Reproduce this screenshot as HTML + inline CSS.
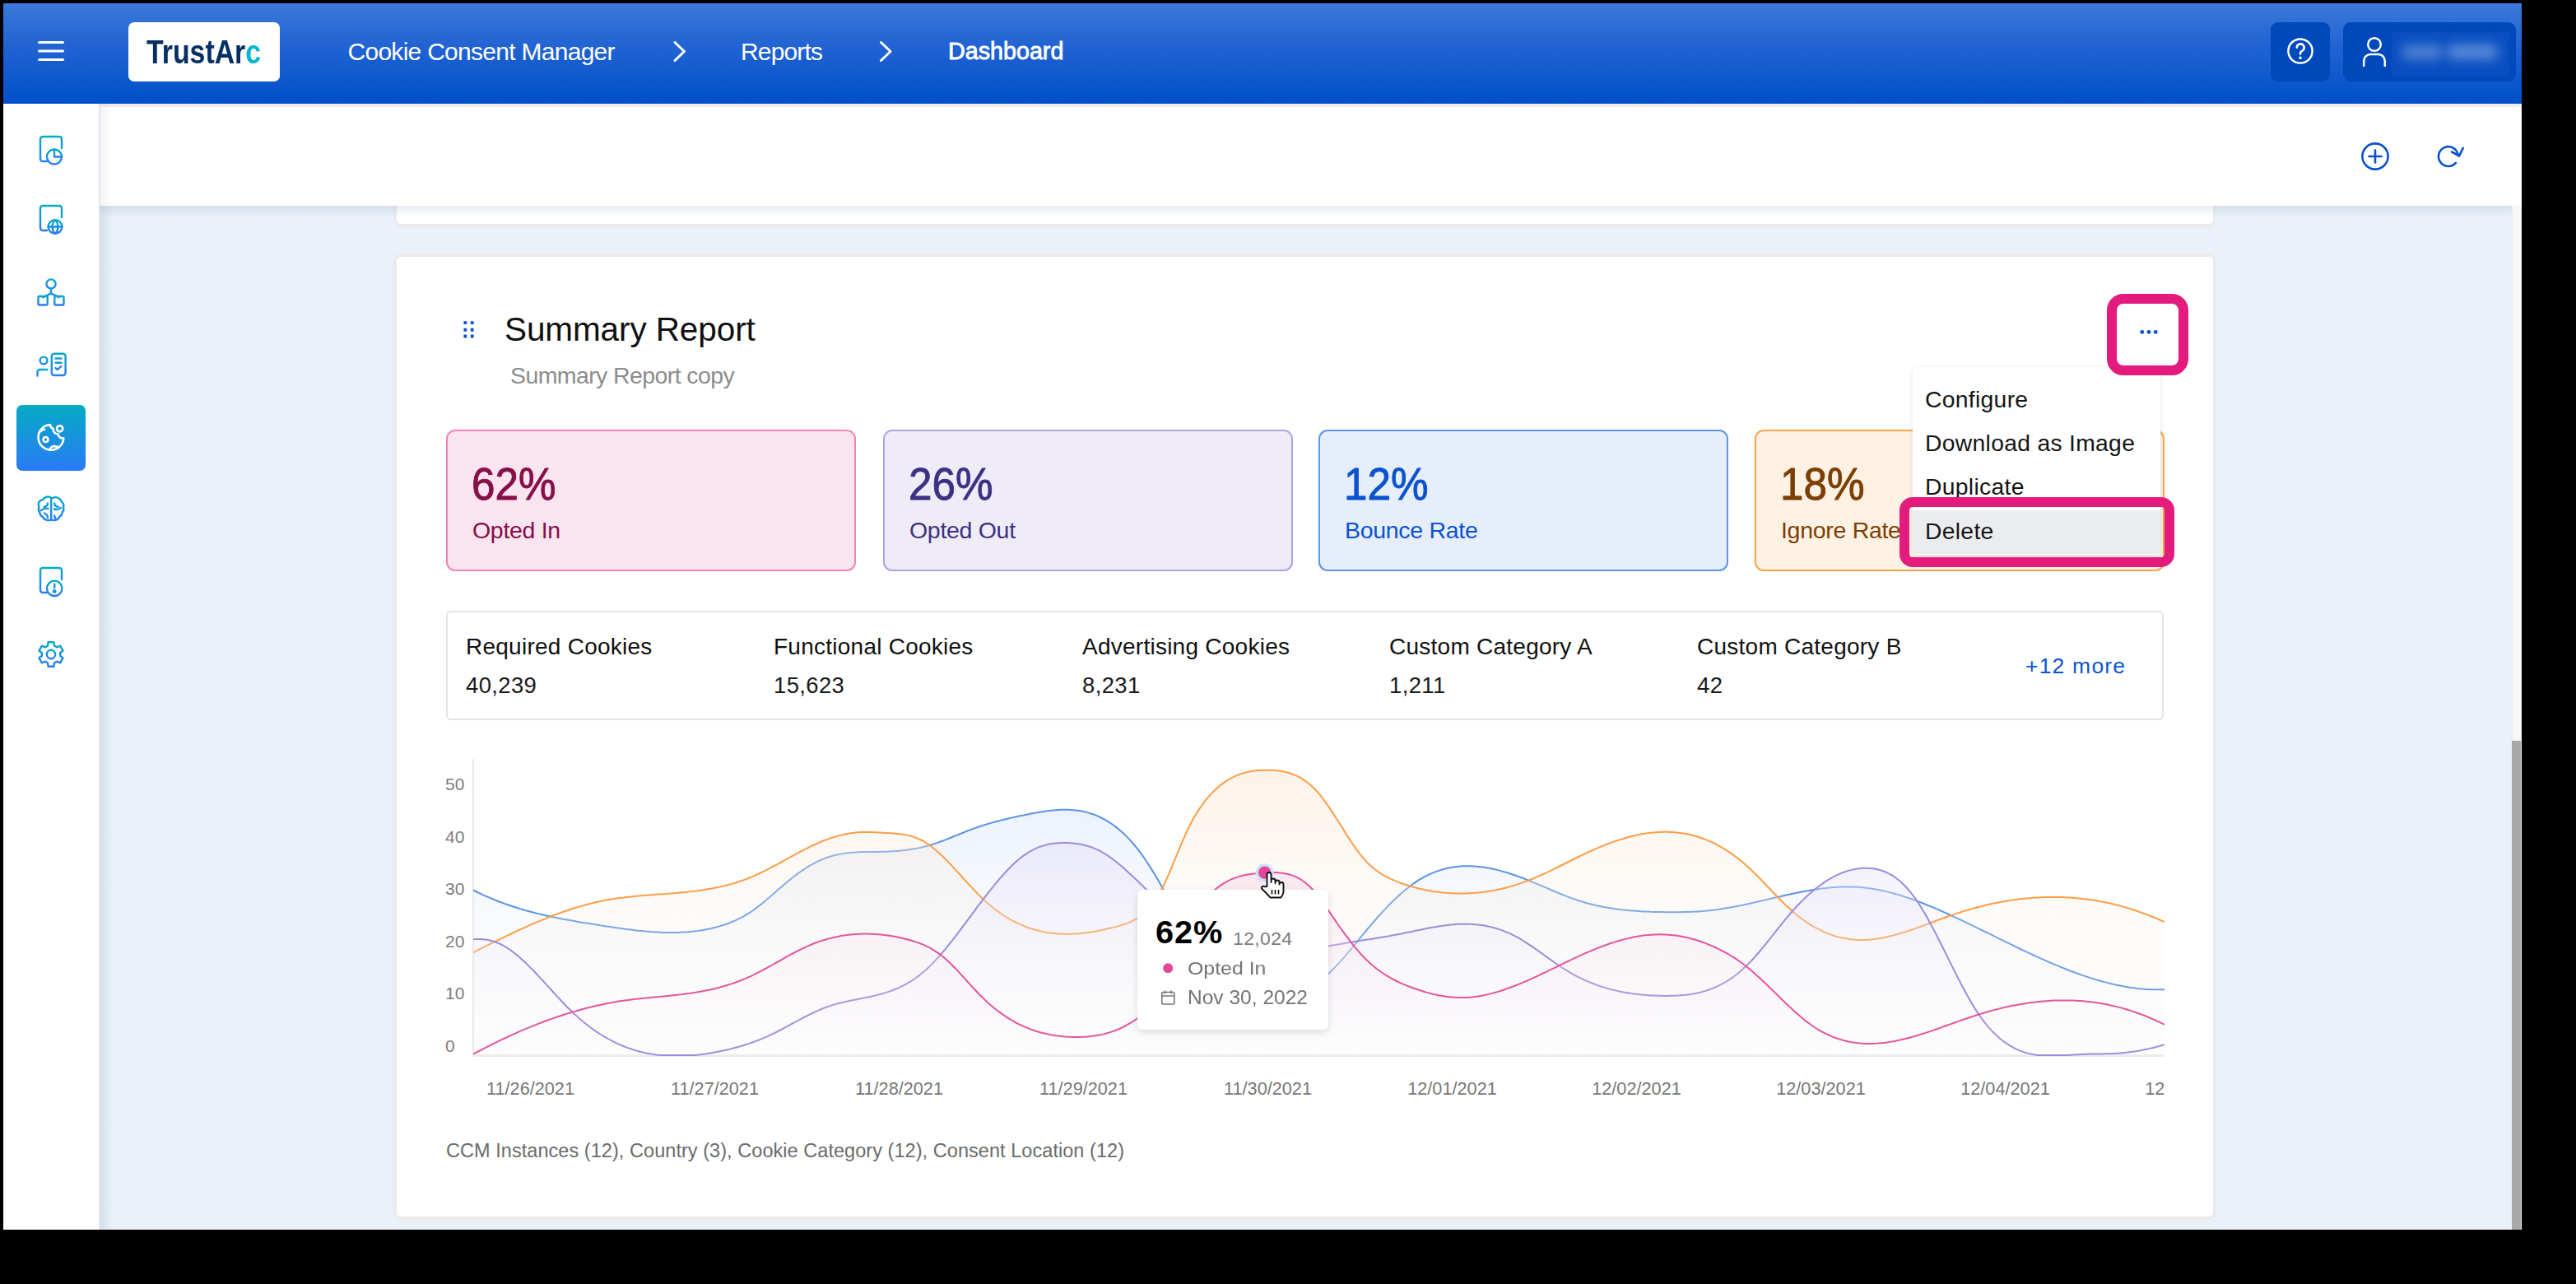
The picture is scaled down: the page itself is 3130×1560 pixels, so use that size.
<!DOCTYPE html>
<html><head><meta charset="utf-8">
<style>
*{margin:0;padding:0;box-sizing:border-box}
html,body{width:3130px;height:1560px;overflow:hidden;background:#000;font-family:"Liberation Sans",sans-serif}
.a{position:absolute}
.t{position:absolute;white-space:nowrap;line-height:1}
#header{left:4px;top:4px;width:3060px;height:122px;background:linear-gradient(#3a79d9,#2062d2 45%,#0050c9)}
#side{left:4px;top:126px;width:118px;height:1368px;background:#fff;border-right:2px solid #dfe6ee}
#topbar{left:122px;top:126px;width:2942px;height:124px;background:#fff;border-top:4px solid #efefef}
#main{left:122px;top:250px;width:2930px;height:1244px;background:#eaf1f9;overflow:hidden}
#track{left:3052px;top:250px;width:12px;height:1244px;background:#f7f7f7;border-left:1px solid #ececec}
#thumb{left:3052px;top:900px;width:11px;height:594px;background:#a9a9a9}
.card{position:absolute;background:#fff;border:4px solid #ebebeb;border-radius:9px}
.stat{position:absolute;top:522px;width:498px;height:172px;border:2px solid;border-radius:11px}
.stat .v{position:absolute;left:29px;top:36px;font-size:56px;line-height:1;letter-spacing:0;transform:scaleX(0.915);transform-origin:0 0;-webkit-text-stroke:0.9px currentColor}
.stat .l{position:absolute;left:30px;top:106px;font-size:28.5px;line-height:1;letter-spacing:-0.3px}
.cat{position:absolute;font-size:28px;line-height:1;color:#111;letter-spacing:0.25px}
.catv{position:absolute;font-size:27.5px;line-height:1;color:#1a1a1a;letter-spacing:0.35px}
.yl{position:absolute;font-size:21px;line-height:1;color:#7d7d7d}
.xl{position:absolute;font-size:21.7px;line-height:1;color:#777;width:160px;text-align:center}
.mi{position:absolute;left:2339px;font-size:28.3px;line-height:1;color:#151515;letter-spacing:0.3px}
</style></head><body>

<!-- HEADER -->
<div id="header" class="a"></div>
<svg class="a" style="left:0;top:0" width="400" height="130">
  <rect x="46" y="50" width="32" height="3" rx="1.5" fill="#fff"/>
  <rect x="46" y="60.5" width="32" height="3" rx="1.5" fill="#fff"/>
  <rect x="46" y="71" width="32" height="3" rx="1.5" fill="#fff"/>
</svg>
<div class="a" style="left:156px;top:27px;width:184px;height:72px;background:#fff;border-radius:7px"></div>
<div class="t" style="left:178px;top:42.5px;font-size:40px;font-weight:700;letter-spacing:0;color:#062f63;transform:scaleX(0.845);transform-origin:0 0">TrustAr<span style="color:#00b6d2">c</span></div>
<div class="t" style="left:422.5px;top:47.5px;font-size:30px;color:#fff;letter-spacing:-0.72px">Cookie Consent Manager</div>
<svg class="a" style="left:810px;top:40px" width="300" height="45">
  <path d="M10 11.5 L21.5 22.5 L10 33.5" fill="none" stroke="#fff" stroke-width="3" stroke-linecap="round" stroke-linejoin="round"/>
  <path d="M260.5 11.5 L272 22.5 L260.5 33.5" fill="none" stroke="#fff" stroke-width="3" stroke-linecap="round" stroke-linejoin="round"/>
</svg>
<div class="t" style="left:900px;top:47.5px;font-size:30px;color:#fff;letter-spacing:-0.85px">Reports</div>
<div class="t" style="left:1152px;top:48px;font-size:28.7px;color:#fff;letter-spacing:0;transform:scaleX(1.0);transform-origin:0 0;-webkit-text-stroke:0.8px #fff">Dashboard</div>
<div class="a" style="left:2759px;top:27px;width:72px;height:72px;background:#0049bc;border-radius:9px"></div>
<svg class="a" style="left:2759px;top:27px" width="72" height="72">
  <circle cx="36" cy="35" r="14.6" fill="none" stroke="#fff" stroke-width="2.5"/>
  <path d="M31.8 30.8 a4.4 4.4 0 1 1 6.6 3.8 c-1.6 0.9 -2.4 1.6 -2.4 3.4 v0.6" fill="none" stroke="#fff" stroke-width="2.6" stroke-linecap="round"/>
  <circle cx="36" cy="43.2" r="1.8" fill="#fff"/>
</svg>
<div class="a" style="left:2847px;top:27px;width:210px;height:72px;background:#0049bc;border-radius:9px"></div>
<div class="a" style="left:2906px;top:39px;width:142px;height:54px;background:#0a4fc2"></div>
<div class="a" style="left:2918px;top:55px;width:50px;height:17px;background:#5283d4;border-radius:9px;filter:blur(7px)"></div>
<div class="a" style="left:2972px;top:54px;width:64px;height:18px;background:#5a8ad8;border-radius:9px;filter:blur(7px)"></div>
<svg class="a" style="left:2847px;top:27px" width="60" height="72">
  <circle cx="38" cy="27" r="7.8" fill="none" stroke="#fff" stroke-width="2.5"/>
  <path d="M25.2 54 v-7 a8 8 0 0 1 8 -8 h9.6 a8 8 0 0 1 8 8 v7" fill="none" stroke="#fff" stroke-width="2.5"/>
</svg>

<!-- SIDEBAR -->
<div id="side" class="a"></div>
<div class="a" style="left:20px;top:492px;width:84px;height:80px;border-radius:7px;background:linear-gradient(#05abc3,#2a7bf7)"></div>
<svg class="a" style="left:0;top:126px" width="120" height="720">
  <defs>
    <linearGradient id="ig" x1="0" y1="0" x2="0" y2="1"><stop offset="0" stop-color="#06a9c6"/><stop offset="1" stop-color="#2a7ef5"/></linearGradient>
    <linearGradient id="ig2" gradientUnits="userSpaceOnUse" x1="0" y1="477" x2="0" y2="509"><stop offset="0" stop-color="#06a9c6"/><stop offset="1" stop-color="#2a7ef5"/></linearGradient>
    <linearGradient id="ig3" gradientUnits="userSpaceOnUse" x1="0" y1="563" x2="0" y2="598"><stop offset="0" stop-color="#06a9c6"/><stop offset="1" stop-color="#2a7ef5"/></linearGradient>
  </defs>
  <g fill="none" stroke="url(#ig)" stroke-width="2.4" stroke-linecap="round" stroke-linejoin="round">
    <!-- icon1 doc + pie (center y 182 => local 56) -->
    <g transform="translate(0,0)">
      <path d="M57 70 h-5 a3 3 0 0 1 -3 -3 v-24 a3 3 0 0 1 3 -3 h20 a3 3 0 0 1 3 3 v11"/>
      <circle cx="66" cy="64.5" r="9"/>
      <path d="M66 55.5 v9 h9"/>
    </g>
    <!-- icon2 doc + globe (y 266 => local 140) -->
    <g>
      <path d="M57 154 h-5 a3 3 0 0 1 -3 -3 v-24 a3 3 0 0 1 3 -3 h20 a3 3 0 0 1 3 3 v11"/>
      <circle cx="67" cy="149.5" r="8.4"/>
      <path d="M58.6 149.5 h16.8 M67 141.1 c-4.5 4 -4.5 12.8 0 16.8 M67 141.1 c4.5 4 4.5 12.8 0 16.8"/>
    </g>
    <!-- icon3 hierarchy (y 355 => local 229) -->
    <g>
      <circle cx="62" cy="219" r="5.6"/>
      <path d="M62 224.6 v6 M62 230.6 l-10 4.5 M62 230.6 l10 4.5"/>
      <rect x="46.5" y="234" width="11.2" height="10.5" rx="1.5"/>
      <rect x="66.3" y="234" width="11.2" height="10.5" rx="1.5"/>
    </g>
    <!-- icon4 person + clipboard (y 442 => local 316) -->
    <g>
      <circle cx="53" cy="312" r="4.4"/>
      <path d="M45.5 330.5 v-4.5 a3 3 0 0 1 3 -3 h9"/>
      <rect x="62.8" y="303.7" width="16.8" height="26.3" rx="3"/>
      <path d="M67.5 309.5 h7 M67.5 314.8 h7 M67.5 321 l2.3 2.2 l4.5 -4"/>
    </g>
    <!-- icon6 brain (y 619 => local 493) -->
    <g stroke="url(#ig2)">
      <path d="M62.2 478.8 c-2 -1.5 -5 -1.5 -7 -0.5 c-2 0.8 -2.5 2 -3.3 3 c-2.5 0.3 -4.5 2 -5 4.5 c-0.5 2 0 3.5 0.5 4.5 c-0.8 2 -0.5 4.5 0.8 6 c0 2.5 1.5 4.5 3.5 5.5 c0.8 2 2.5 3.5 5 4 c2 0.5 4 0.3 5.5 -0.5 c1.5 0.8 3.5 1 5.5 0.5 c2.5 -0.5 4 -2 4.5 -4 c2 -1 3.5 -3 3.5 -5.5 c1.5 -1.5 2 -4 1.2 -6 c1 -2.5 0 -5 -1.8 -6.5 c-1 -2 -2.5 -4 -4.5 -5 c-2 -0.8 -5 -0.8 -7 0.5 z"/>
      <path d="M62.2 479 v26.5"/>
      <path d="M58 485.5 c0 2.5 -1.5 4 -4.5 4.3 M58.5 492 c-3 -1 -6 0 -8.5 2 M54 497.5 c2 0.8 4 3 4 5.5 M66.2 485.5 c0 2.5 1.5 4 4.5 4.3 M65.8 492.5 c3 1 6 0.5 8 -1.5 M66.2 500.5 c0 2 1 3.5 2.5 4.5"/>
    </g>
    <!-- icon7 doc + alert (y 706 => local 580) -->
    <g>
      <path d="M57 594 h-5 a3 3 0 0 1 -3 -3 v-24 a3 3 0 0 1 3 -3 h20 a3 3 0 0 1 3 3 v11"/>
      <circle cx="66.2" cy="588.8" r="9.2"/>
      <path d="M66.2 583.6 v4.4" stroke="url(#ig3)"/>
    </g>
    <circle cx="66.2" cy="592.4" r="1.25" fill="#2a7ef5"/>
    <!-- icon8 gear (y 795 => local 669) -->
    <g>
      <path d="M66.01 658.54 L65.42 654.19 L58.58 654.19 L57.99 658.54 L54.95 660.30 L50.88 658.63 L47.46 664.56 L50.94 667.25 L50.94 670.75 L47.46 673.44 L50.88 679.37 L54.95 677.70 L57.99 679.46 L58.58 683.81 L65.42 683.81 L66.01 679.46 L69.05 677.70 L73.12 679.37 L76.54 673.44 L73.06 670.75 L73.06 667.25 L76.54 664.56 L73.12 658.63 L69.05 660.30 Z"/>
      <circle cx="62" cy="669" r="5.2"/>
    </g>
  </g>
  <!-- active cookie icon (y 531 => local 405) -->
  <g fill="none" stroke="#fff" stroke-width="2.6" stroke-linecap="round" stroke-linejoin="round">
    <path d="M61 390 a15.4 15.4 0 1 0 16.3 16.5 c-3.5 0.5 -6.5 -2 -6.8 -5.2 c-3.5 0 -6.3 -3 -6 -6.5 c-2.2 -1 -3.7 -2.7 -3.5 -4.8 z"/>
    <circle cx="72.6" cy="394.8" r="3.6"/>
    <circle cx="55.5" cy="408" r="3"/>
    <path d="M60.5 420 a6 6 0 0 1 10 -2"/>
    <path d="M50 398 a3 3 0 0 1 4 -2"/>
  </g>
</svg>

<!-- TOPBAR + MAIN -->
<div id="topbar" class="a"></div>
<div class="a" style="left:122px;top:126px;width:16px;height:124px;background:linear-gradient(90deg,rgba(0,0,0,0.045),rgba(0,0,0,0))"></div>
<svg class="a" style="left:2860px;top:164px" width="140" height="52">
  <g fill="none" stroke="#0a52cc" stroke-width="2.6" stroke-linecap="round">
    <circle cx="26" cy="26" r="15.6"/>
    <path d="M26 18.5 v15 M18.5 26 h15"/>
    <g transform="translate(0,-1.5)"><path d="M123.9 35.3 A11.9 11.9 0 1 1 126.6 25.5"/>
    <path d="M119 22 L128 27 L132.8 17.4"/></g>
  </g>
</svg>
<div id="main" class="a">
  <div class="card" style="left:356px;top:-70px;width:2215px;height:96px"></div>
  <div class="a" style="left:0;top:0;width:2930px;height:14px;background:linear-gradient(rgba(90,120,160,0.14),rgba(90,120,160,0))"></div>
  <div class="a" style="left:0;top:0;width:16px;height:1244px;background:linear-gradient(90deg,rgba(90,120,160,0.14),rgba(90,120,160,0))"></div>
</div>
<div id="track" class="a"></div>
<div id="thumb" class="a"></div>


<!-- MAIN CARD -->
<div class="card" style="left:478px;top:308px;width:2215px;height:1174px"></div>

<!-- drag handle -->
<svg class="a" style="left:560px;top:388px" width="20" height="25">
  <g fill="#0a52cc">
    <rect x="3.4" y="2.2" width="3.8" height="3.9" rx="0.6"/><rect x="11.8" y="2.2" width="3.8" height="3.9" rx="0.6"/>
    <rect x="3.4" y="10.8" width="3.8" height="3.9" rx="0.6"/><rect x="11.8" y="10.8" width="3.8" height="3.9" rx="0.6"/>
    <rect x="3.4" y="18.6" width="3.8" height="3.9" rx="0.6"/><rect x="11.8" y="18.6" width="3.8" height="3.9" rx="0.6"/>
  </g>
</svg>
<div class="t" style="left:613px;top:380px;font-size:40.5px;color:#111;letter-spacing:-0.1px">Summary Report</div>
<div class="t" style="left:620px;top:441.5px;font-size:28.5px;color:#8c8c8c;letter-spacing:-0.6px">Summary Report copy</div>

<!-- stat cards -->
<div class="stat" style="left:542px;background:#fae4ef;border-color:#ee86b4;color:#860f48"><div class="v">62%</div><div class="l">Opted In</div></div>
<div class="stat" style="left:1073px;background:#efecf8;border-color:#ada4e4;color:#3d3183"><div class="v">26%</div><div class="l">Opted Out</div></div>
<div class="stat" style="left:1602px;background:#e6eefb;border-color:#5d95e8;color:#0b52cf"><div class="v">12%</div><div class="l">Bounce Rate</div></div>
<div class="stat" style="left:2132px;background:#fff2e4;border-color:#f7a650;color:#7b3f03"><div class="v">18%</div><div class="l">Ignore Rate</div></div>

<!-- category table -->
<div class="a" style="left:542px;top:742px;width:2087px;height:133px;border:2px solid #e4e4e4;border-radius:6px;background:#fff"></div>
<div class="cat t" style="left:566px;top:772px">Required Cookies</div>
<div class="catv t" style="left:566px;top:818.5px">40,239</div>
<div class="cat t" style="left:940px;top:772px">Functional Cookies</div>
<div class="catv t" style="left:940px;top:818.5px">15,623</div>
<div class="cat t" style="left:1315px;top:772px">Advertising Cookies</div>
<div class="catv t" style="left:1315px;top:818.5px">8,231</div>
<div class="cat t" style="left:1688px;top:772px">Custom Category A</div>
<div class="catv t" style="left:1688px;top:818.5px">1,211</div>
<div class="cat t" style="left:2062px;top:772px">Custom Category B</div>
<div class="catv t" style="left:2062px;top:818.5px">42</div>
<div class="t" style="left:2461px;top:796px;font-size:26.5px;color:#0b55d2;letter-spacing:1.2px">+12 more</div>

<!-- CHART -->
<svg class="a" style="left:0;top:0" width="3130" height="1560">
  <defs>
    <clipPath id="cc"><rect x="575" y="900" width="2055" height="383"/></clipPath>
    <linearGradient id="gp" gradientUnits="userSpaceOnUse" x1="0" y1="1060" x2="0" y2="1282"><stop offset="0" stop-color="#f7d9ea" stop-opacity="0.55"/><stop offset="0.55" stop-color="#f7e6f0" stop-opacity="0.2"/><stop offset="1" stop-color="#f7e6f0" stop-opacity="0.02"/></linearGradient>
    <linearGradient id="gb" gradientUnits="userSpaceOnUse" x1="0" y1="985" x2="0" y2="1282"><stop offset="0" stop-color="#dde8fb" stop-opacity="0.55"/><stop offset="0.55" stop-color="#e8eef8" stop-opacity="0.2"/><stop offset="1" stop-color="#e8eef8" stop-opacity="0.02"/></linearGradient>
    <linearGradient id="go" gradientUnits="userSpaceOnUse" x1="0" y1="934" x2="0" y2="1282"><stop offset="0" stop-color="#fde9d6" stop-opacity="0.55"/><stop offset="0.55" stop-color="#f6eee6" stop-opacity="0.2"/><stop offset="1" stop-color="#f6eee6" stop-opacity="0.02"/></linearGradient>
    <linearGradient id="gu" gradientUnits="userSpaceOnUse" x1="0" y1="1025" x2="0" y2="1282"><stop offset="0" stop-color="#e6e0f8" stop-opacity="0.55"/><stop offset="0.55" stop-color="#eeeaf8" stop-opacity="0.2"/><stop offset="1" stop-color="#eeeaf8" stop-opacity="0.02"/></linearGradient>
  </defs>
  <rect x="574" y="922" width="2" height="360" fill="#e8e8e8"/>
  <rect x="575" y="1281" width="2055" height="3" fill="#ececec"/>
  <g clip-path="url(#cc)">
    <g stroke-width="2" fill-opacity="1">
    <path d="M575.0 1082.7 L578.0 1084.2 L581.0 1085.7 L584.0 1087.1 L587.0 1088.5 L590.0 1089.8 L593.0 1091.1 L596.0 1092.4 L599.0 1093.7 L602.0 1094.9 L605.0 1096.0 L608.0 1097.2 L611.0 1098.3 L614.0 1099.4 L617.0 1100.4 L620.0 1101.5 L623.0 1102.5 L626.0 1103.4 L629.0 1104.4 L632.0 1105.3 L635.0 1106.2 L638.0 1107.1 L641.0 1107.9 L644.0 1108.7 L647.0 1109.5 L650.0 1110.3 L653.0 1111.1 L656.0 1111.8 L659.0 1112.5 L662.0 1113.2 L665.0 1113.9 L668.0 1114.5 L671.0 1115.2 L674.0 1115.8 L677.0 1116.4 L680.0 1117.0 L683.0 1117.6 L686.0 1118.2 L689.0 1118.7 L692.0 1119.3 L695.0 1119.8 L698.0 1120.3 L701.0 1120.9 L704.0 1121.4 L707.0 1121.9 L710.0 1122.4 L713.0 1122.8 L716.0 1123.3 L719.0 1123.8 L722.0 1124.3 L725.0 1124.7 L728.0 1125.2 L731.0 1125.7 L734.0 1126.1 L737.0 1126.6 L740.0 1127.0 L743.0 1127.5 L746.0 1127.9 L749.0 1128.4 L752.0 1128.8 L755.0 1129.2 L758.0 1129.7 L761.0 1130.1 L764.0 1130.5 L767.0 1130.8 L770.0 1131.2 L773.0 1131.6 L776.0 1131.9 L779.0 1132.2 L782.0 1132.5 L785.0 1132.8 L788.0 1133.0 L791.0 1133.3 L794.0 1133.5 L797.0 1133.7 L800.0 1133.8 L803.0 1134.0 L806.0 1134.1 L809.0 1134.2 L812.0 1134.2 L815.0 1134.2 L818.0 1134.2 L821.0 1134.2 L824.0 1134.1 L827.0 1134.0 L830.0 1133.8 L833.0 1133.6 L836.0 1133.4 L839.0 1133.1 L842.0 1132.8 L845.0 1132.5 L848.0 1132.1 L851.0 1131.6 L854.0 1131.1 L857.0 1130.6 L860.0 1130.0 L863.0 1129.4 L866.0 1128.7 L869.0 1128.0 L872.0 1127.2 L875.0 1126.3 L878.0 1125.4 L881.0 1124.4 L884.0 1123.4 L887.0 1122.2 L890.0 1121.0 L893.0 1119.8 L896.0 1118.4 L899.0 1116.9 L902.0 1115.3 L905.0 1113.6 L908.0 1111.9 L911.0 1110.0 L914.0 1108.0 L917.0 1105.8 L920.0 1103.6 L923.0 1101.3 L926.0 1098.9 L929.0 1096.4 L932.0 1093.8 L935.0 1091.3 L938.0 1088.7 L941.0 1086.0 L944.0 1083.4 L947.0 1080.8 L950.0 1078.2 L953.0 1075.6 L956.0 1073.1 L959.0 1070.6 L962.0 1068.2 L965.0 1065.9 L968.0 1063.6 L971.0 1061.4 L974.0 1059.3 L977.0 1057.3 L980.0 1055.4 L983.0 1053.6 L986.0 1051.8 L989.0 1050.2 L992.0 1048.6 L995.0 1047.2 L998.0 1045.8 L1001.0 1044.6 L1004.0 1043.4 L1007.0 1042.4 L1010.0 1041.5 L1013.0 1040.6 L1016.0 1039.9 L1019.0 1039.3 L1022.0 1038.7 L1025.0 1038.2 L1028.0 1037.8 L1031.0 1037.4 L1034.0 1037.1 L1037.0 1036.9 L1040.0 1036.7 L1043.0 1036.5 L1046.0 1036.4 L1049.0 1036.3 L1052.0 1036.3 L1055.0 1036.2 L1058.0 1036.2 L1061.0 1036.1 L1064.0 1036.1 L1067.0 1036.1 L1070.0 1036.0 L1073.0 1036.0 L1076.0 1035.9 L1079.0 1035.8 L1082.0 1035.7 L1085.0 1035.5 L1088.0 1035.3 L1091.0 1035.1 L1094.0 1034.8 L1097.0 1034.5 L1100.0 1034.1 L1103.0 1033.7 L1106.0 1033.3 L1109.0 1032.8 L1112.0 1032.3 L1115.0 1031.7 L1118.0 1031.1 L1121.0 1030.4 L1124.0 1029.7 L1127.0 1028.9 L1130.0 1028.0 L1133.0 1027.1 L1136.0 1026.1 L1139.0 1025.1 L1142.0 1024.0 L1145.0 1022.9 L1148.0 1021.8 L1151.0 1020.6 L1154.0 1019.4 L1157.0 1018.2 L1160.0 1017.0 L1163.0 1015.8 L1166.0 1014.6 L1169.0 1013.4 L1172.0 1012.2 L1175.0 1011.0 L1178.0 1009.8 L1181.0 1008.7 L1184.0 1007.6 L1187.0 1006.5 L1190.0 1005.5 L1193.0 1004.5 L1196.0 1003.5 L1199.0 1002.6 L1202.0 1001.7 L1205.0 1000.8 L1208.0 1000.0 L1211.0 999.2 L1214.0 998.4 L1217.0 997.6 L1220.0 996.9 L1223.0 996.2 L1226.0 995.5 L1229.0 994.8 L1232.0 994.1 L1235.0 993.5 L1238.0 992.8 L1241.0 992.2 L1244.0 991.6 L1247.0 991.0 L1250.0 990.4 L1253.0 989.8 L1256.0 989.2 L1259.0 988.6 L1262.0 988.1 L1265.0 987.6 L1268.0 987.1 L1271.0 986.7 L1274.0 986.3 L1277.0 985.9 L1280.0 985.6 L1283.0 985.4 L1286.0 985.2 L1289.0 985.0 L1292.0 984.9 L1295.0 984.9 L1298.0 985.0 L1301.0 985.1 L1304.0 985.4 L1307.0 985.7 L1310.0 986.0 L1313.0 986.5 L1316.0 987.1 L1319.0 987.8 L1322.0 988.6 L1325.0 989.5 L1328.0 990.5 L1331.0 991.6 L1334.0 992.8 L1337.0 994.2 L1340.0 995.7 L1343.0 997.3 L1346.0 999.1 L1349.0 1001.0 L1352.0 1003.1 L1355.0 1005.3 L1358.0 1007.6 L1361.0 1010.1 L1364.0 1012.8 L1367.0 1015.6 L1370.0 1018.6 L1373.0 1021.8 L1376.0 1025.2 L1379.0 1028.7 L1382.0 1032.4 L1385.0 1036.3 L1388.0 1040.4 L1391.0 1044.7 L1394.0 1049.2 L1397.0 1053.8 L1400.0 1058.6 L1403.0 1063.5 L1406.0 1068.5 L1409.0 1073.7 L1412.0 1078.9 L1415.0 1084.1 L1418.0 1089.5 L1421.0 1094.8 L1424.0 1100.2 L1427.0 1105.6 L1430.0 1111.0 L1433.0 1116.4 L1436.0 1121.7 L1439.0 1127.0 L1442.0 1132.2 L1445.0 1137.3 L1448.0 1142.3 L1451.0 1147.2 L1454.0 1151.9 L1457.0 1156.6 L1460.0 1161.0 L1463.0 1165.3 L1466.0 1169.4 L1469.0 1173.4 L1472.0 1177.1 L1475.0 1180.7 L1478.0 1184.1 L1481.0 1187.4 L1484.0 1190.5 L1487.0 1193.4 L1490.0 1196.1 L1493.0 1198.7 L1496.0 1201.2 L1499.0 1203.4 L1502.0 1205.5 L1505.0 1207.5 L1508.0 1209.3 L1511.0 1210.9 L1514.0 1212.4 L1517.0 1213.8 L1520.0 1215.0 L1523.0 1216.0 L1526.0 1216.9 L1529.0 1217.7 L1532.0 1218.3 L1535.0 1218.7 L1538.0 1219.1 L1541.0 1219.2 L1544.0 1219.3 L1547.0 1219.2 L1550.0 1219.0 L1553.0 1218.6 L1556.0 1218.1 L1559.0 1217.5 L1562.0 1216.7 L1565.0 1215.8 L1568.0 1214.8 L1571.0 1213.7 L1574.0 1212.4 L1577.0 1211.0 L1580.0 1209.5 L1583.0 1207.9 L1586.0 1206.2 L1589.0 1204.3 L1592.0 1202.3 L1595.0 1200.2 L1598.0 1198.0 L1601.0 1195.7 L1604.0 1193.3 L1607.0 1190.7 L1610.0 1188.1 L1613.0 1185.4 L1616.0 1182.5 L1619.0 1179.5 L1622.0 1176.5 L1625.0 1173.3 L1628.0 1170.1 L1631.0 1166.7 L1634.0 1163.3 L1637.0 1159.8 L1640.0 1156.2 L1643.0 1152.6 L1646.0 1148.9 L1649.0 1145.3 L1652.0 1141.6 L1655.0 1137.9 L1658.0 1134.3 L1661.0 1130.7 L1664.0 1127.2 L1667.0 1123.6 L1670.0 1120.2 L1673.0 1116.7 L1676.0 1113.4 L1679.0 1110.1 L1682.0 1106.8 L1685.0 1103.6 L1688.0 1100.5 L1691.0 1097.5 L1694.0 1094.5 L1697.0 1091.6 L1700.0 1088.9 L1703.0 1086.2 L1706.0 1083.6 L1709.0 1081.1 L1712.0 1078.7 L1715.0 1076.5 L1718.0 1074.3 L1721.0 1072.3 L1724.0 1070.4 L1727.0 1068.6 L1730.0 1066.9 L1733.0 1065.4 L1736.0 1063.9 L1739.0 1062.5 L1742.0 1061.3 L1745.0 1060.1 L1748.0 1059.1 L1751.0 1058.1 L1754.0 1057.2 L1757.0 1056.5 L1760.0 1055.8 L1763.0 1055.2 L1766.0 1054.7 L1769.0 1054.3 L1772.0 1054.0 L1775.0 1053.7 L1778.0 1053.5 L1781.0 1053.5 L1784.0 1053.4 L1787.0 1053.5 L1790.0 1053.6 L1793.0 1053.8 L1796.0 1054.1 L1799.0 1054.4 L1802.0 1054.8 L1805.0 1055.2 L1808.0 1055.8 L1811.0 1056.3 L1814.0 1056.9 L1817.0 1057.6 L1820.0 1058.3 L1823.0 1059.1 L1826.0 1060.0 L1829.0 1060.8 L1832.0 1061.7 L1835.0 1062.7 L1838.0 1063.7 L1841.0 1064.7 L1844.0 1065.8 L1847.0 1066.9 L1850.0 1068.0 L1853.0 1069.1 L1856.0 1070.3 L1859.0 1071.5 L1862.0 1072.8 L1865.0 1074.0 L1868.0 1075.3 L1871.0 1076.5 L1874.0 1077.8 L1877.0 1079.1 L1880.0 1080.4 L1883.0 1081.7 L1886.0 1083.0 L1889.0 1084.2 L1892.0 1085.5 L1895.0 1086.7 L1898.0 1087.9 L1901.0 1089.1 L1904.0 1090.3 L1907.0 1091.5 L1910.0 1092.6 L1913.0 1093.6 L1916.0 1094.7 L1919.0 1095.7 L1922.0 1096.6 L1925.0 1097.5 L1928.0 1098.4 L1931.0 1099.2 L1934.0 1099.9 L1937.0 1100.7 L1940.0 1101.4 L1943.0 1102.0 L1946.0 1102.6 L1949.0 1103.2 L1952.0 1103.8 L1955.0 1104.3 L1958.0 1104.8 L1961.0 1105.2 L1964.0 1105.6 L1967.0 1106.0 L1970.0 1106.4 L1973.0 1106.7 L1976.0 1107.0 L1979.0 1107.3 L1982.0 1107.6 L1985.0 1107.8 L1988.0 1108.0 L1991.0 1108.2 L1994.0 1108.4 L1997.0 1108.6 L2000.0 1108.7 L2003.0 1108.8 L2006.0 1109.0 L2009.0 1109.1 L2012.0 1109.1 L2015.0 1109.2 L2018.0 1109.3 L2021.0 1109.3 L2024.0 1109.4 L2027.0 1109.4 L2030.0 1109.4 L2033.0 1109.4 L2036.0 1109.4 L2039.0 1109.4 L2042.0 1109.4 L2045.0 1109.3 L2048.0 1109.2 L2051.0 1109.2 L2054.0 1109.0 L2057.0 1108.9 L2060.0 1108.8 L2063.0 1108.6 L2066.0 1108.4 L2069.0 1108.2 L2072.0 1107.9 L2075.0 1107.6 L2078.0 1107.3 L2081.0 1107.0 L2084.0 1106.6 L2087.0 1106.2 L2090.0 1105.8 L2093.0 1105.3 L2096.0 1104.8 L2099.0 1104.3 L2102.0 1103.8 L2105.0 1103.3 L2108.0 1102.7 L2111.0 1102.1 L2114.0 1101.5 L2117.0 1100.9 L2120.0 1100.2 L2123.0 1099.6 L2126.0 1098.9 L2129.0 1098.3 L2132.0 1097.6 L2135.0 1096.9 L2138.0 1096.2 L2141.0 1095.5 L2144.0 1094.8 L2147.0 1094.1 L2150.0 1093.4 L2153.0 1092.7 L2156.0 1092.0 L2159.0 1091.3 L2162.0 1090.6 L2165.0 1089.9 L2168.0 1089.2 L2171.0 1088.5 L2174.0 1087.9 L2177.0 1087.2 L2180.0 1086.6 L2183.0 1086.0 L2186.0 1085.4 L2189.0 1084.8 L2192.0 1084.2 L2195.0 1083.7 L2198.0 1083.1 L2201.0 1082.6 L2204.0 1082.1 L2207.0 1081.7 L2210.0 1081.2 L2213.0 1080.8 L2216.0 1080.5 L2219.0 1080.1 L2222.0 1079.8 L2225.0 1079.5 L2228.0 1079.3 L2231.0 1079.1 L2234.0 1078.9 L2237.0 1078.8 L2240.0 1078.7 L2243.0 1078.6 L2246.0 1078.6 L2249.0 1078.6 L2252.0 1078.7 L2255.0 1078.9 L2258.0 1079.0 L2261.0 1079.3 L2264.0 1079.5 L2267.0 1079.9 L2270.0 1080.2 L2273.0 1080.7 L2276.0 1081.1 L2279.0 1081.6 L2282.0 1082.2 L2285.0 1082.8 L2288.0 1083.4 L2291.0 1084.1 L2294.0 1084.8 L2297.0 1085.6 L2300.0 1086.4 L2303.0 1087.2 L2306.0 1088.1 L2309.0 1089.0 L2312.0 1089.9 L2315.0 1090.9 L2318.0 1091.9 L2321.0 1092.9 L2324.0 1094.0 L2327.0 1095.1 L2330.0 1096.2 L2333.0 1097.3 L2336.0 1098.5 L2339.0 1099.7 L2342.0 1100.9 L2345.0 1102.1 L2348.0 1103.3 L2351.0 1104.6 L2354.0 1105.9 L2357.0 1107.2 L2360.0 1108.5 L2363.0 1109.9 L2366.0 1111.2 L2369.0 1112.6 L2372.0 1114.0 L2375.0 1115.4 L2378.0 1116.8 L2381.0 1118.2 L2384.0 1119.6 L2387.0 1121.1 L2390.0 1122.5 L2393.0 1123.9 L2396.0 1125.4 L2399.0 1126.8 L2402.0 1128.3 L2405.0 1129.8 L2408.0 1131.2 L2411.0 1132.7 L2414.0 1134.2 L2417.0 1135.6 L2420.0 1137.1 L2423.0 1138.6 L2426.0 1140.1 L2429.0 1141.5 L2432.0 1143.0 L2435.0 1144.5 L2438.0 1146.0 L2441.0 1147.4 L2444.0 1148.9 L2447.0 1150.3 L2450.0 1151.8 L2453.0 1153.2 L2456.0 1154.7 L2459.0 1156.1 L2462.0 1157.5 L2465.0 1158.9 L2468.0 1160.3 L2471.0 1161.7 L2474.0 1163.1 L2477.0 1164.4 L2480.0 1165.8 L2483.0 1167.1 L2486.0 1168.5 L2489.0 1169.8 L2492.0 1171.1 L2495.0 1172.4 L2498.0 1173.6 L2501.0 1174.9 L2504.0 1176.1 L2507.0 1177.3 L2510.0 1178.5 L2513.0 1179.7 L2516.0 1180.9 L2519.0 1182.0 L2522.0 1183.1 L2525.0 1184.2 L2528.0 1185.3 L2531.0 1186.3 L2534.0 1187.3 L2537.0 1188.3 L2540.0 1189.3 L2543.0 1190.2 L2546.0 1191.2 L2549.0 1192.1 L2552.0 1192.9 L2555.0 1193.8 L2558.0 1194.6 L2561.0 1195.3 L2564.0 1196.1 L2567.0 1196.8 L2570.0 1197.5 L2573.0 1198.1 L2576.0 1198.7 L2579.0 1199.3 L2582.0 1199.9 L2585.0 1200.4 L2588.0 1200.9 L2591.0 1201.3 L2594.0 1201.7 L2597.0 1202.1 L2600.0 1202.4 L2603.0 1202.7 L2606.0 1202.9 L2609.0 1203.1 L2612.0 1203.3 L2615.0 1203.4 L2618.0 1203.5 L2621.0 1203.5 L2624.0 1203.5 L2627.0 1203.5 L2630.0 1203.4 L2630 1282 L575 1282 Z" fill="url(#gb)"/>
    <path d="M575.0 1081.5 L578.0 1083.0 L581.0 1084.5 L584.0 1085.9 L587.0 1087.3 L590.0 1088.6 L593.0 1089.9 L596.0 1091.2 L599.0 1092.5 L602.0 1093.7 L605.0 1094.8 L608.0 1096.0 L611.0 1097.1 L614.0 1098.2 L617.0 1099.2 L620.0 1100.3 L623.0 1101.3 L626.0 1102.2 L629.0 1103.2 L632.0 1104.1 L635.0 1105.0 L638.0 1105.9 L641.0 1106.7 L644.0 1107.5 L647.0 1108.3 L650.0 1109.1 L653.0 1109.9 L656.0 1110.6 L659.0 1111.3 L662.0 1112.0 L665.0 1112.7 L668.0 1113.3 L671.0 1114.0 L674.0 1114.6 L677.0 1115.2 L680.0 1115.8 L683.0 1116.4 L686.0 1117.0 L689.0 1117.5 L692.0 1118.1 L695.0 1118.6 L698.0 1119.1 L701.0 1119.7 L704.0 1120.2 L707.0 1120.7 L710.0 1121.2 L713.0 1121.6 L716.0 1122.1 L719.0 1122.6 L722.0 1123.1 L725.0 1123.5 L728.0 1124.0 L731.0 1124.5 L734.0 1124.9 L737.0 1125.4 L740.0 1125.8 L743.0 1126.3 L746.0 1126.7 L749.0 1127.2 L752.0 1127.6 L755.0 1128.0 L758.0 1128.5 L761.0 1128.9 L764.0 1129.3 L767.0 1129.6 L770.0 1130.0 L773.0 1130.4 L776.0 1130.7 L779.0 1131.0 L782.0 1131.3 L785.0 1131.6 L788.0 1131.8 L791.0 1132.1 L794.0 1132.3 L797.0 1132.5 L800.0 1132.6 L803.0 1132.8 L806.0 1132.9 L809.0 1133.0 L812.0 1133.0 L815.0 1133.0 L818.0 1133.0 L821.0 1133.0 L824.0 1132.9 L827.0 1132.8 L830.0 1132.6 L833.0 1132.4 L836.0 1132.2 L839.0 1131.9 L842.0 1131.6 L845.0 1131.3 L848.0 1130.9 L851.0 1130.4 L854.0 1129.9 L857.0 1129.4 L860.0 1128.8 L863.0 1128.2 L866.0 1127.5 L869.0 1126.8 L872.0 1126.0 L875.0 1125.1 L878.0 1124.2 L881.0 1123.2 L884.0 1122.2 L887.0 1121.0 L890.0 1119.8 L893.0 1118.6 L896.0 1117.2 L899.0 1115.7 L902.0 1114.1 L905.0 1112.4 L908.0 1110.7 L911.0 1108.8 L914.0 1106.8 L917.0 1104.6 L920.0 1102.4 L923.0 1100.1 L926.0 1097.7 L929.0 1095.2 L932.0 1092.6 L935.0 1090.1 L938.0 1087.5 L941.0 1084.8 L944.0 1082.2 L947.0 1079.6 L950.0 1077.0 L953.0 1074.4 L956.0 1071.9 L959.0 1069.4 L962.0 1067.0 L965.0 1064.7 L968.0 1062.4 L971.0 1060.2 L974.0 1058.1 L977.0 1056.1 L980.0 1054.2 L983.0 1052.4 L986.0 1050.6 L989.0 1049.0 L992.0 1047.4 L995.0 1046.0 L998.0 1044.6 L1001.0 1043.4 L1004.0 1042.2 L1007.0 1041.2 L1010.0 1040.3 L1013.0 1039.4 L1016.0 1038.7 L1019.0 1038.1 L1022.0 1037.5 L1025.0 1037.0 L1028.0 1036.6 L1031.0 1036.2 L1034.0 1035.9 L1037.0 1035.7 L1040.0 1035.5 L1043.0 1035.3 L1046.0 1035.2 L1049.0 1035.1 L1052.0 1035.1 L1055.0 1035.0 L1058.0 1035.0 L1061.0 1034.9 L1064.0 1034.9 L1067.0 1034.9 L1070.0 1034.8 L1073.0 1034.8 L1076.0 1034.7 L1079.0 1034.6 L1082.0 1034.5 L1085.0 1034.3 L1088.0 1034.1 L1091.0 1033.9 L1094.0 1033.6 L1097.0 1033.3 L1100.0 1032.9 L1103.0 1032.5 L1106.0 1032.1 L1109.0 1031.6 L1112.0 1031.1 L1115.0 1030.5 L1118.0 1029.9 L1121.0 1029.2 L1124.0 1028.5 L1127.0 1027.7 L1130.0 1026.8 L1133.0 1025.9 L1136.0 1024.9 L1139.0 1023.9 L1142.0 1022.8 L1145.0 1021.7 L1148.0 1020.6 L1151.0 1019.4 L1154.0 1018.2 L1157.0 1017.0 L1160.0 1015.8 L1163.0 1014.6 L1166.0 1013.4 L1169.0 1012.2 L1172.0 1011.0 L1175.0 1009.8 L1178.0 1008.6 L1181.0 1007.5 L1184.0 1006.4 L1187.0 1005.3 L1190.0 1004.3 L1193.0 1003.3 L1196.0 1002.3 L1199.0 1001.4 L1202.0 1000.5 L1205.0 999.6 L1208.0 998.8 L1211.0 998.0 L1214.0 997.2 L1217.0 996.4 L1220.0 995.7 L1223.0 995.0 L1226.0 994.3 L1229.0 993.6 L1232.0 992.9 L1235.0 992.3 L1238.0 991.6 L1241.0 991.0 L1244.0 990.4 L1247.0 989.8 L1250.0 989.2 L1253.0 988.6 L1256.0 988.0 L1259.0 987.4 L1262.0 986.9 L1265.0 986.4 L1268.0 985.9 L1271.0 985.5 L1274.0 985.1 L1277.0 984.7 L1280.0 984.4 L1283.0 984.2 L1286.0 984.0 L1289.0 983.8 L1292.0 983.7 L1295.0 983.7 L1298.0 983.8 L1301.0 983.9 L1304.0 984.2 L1307.0 984.5 L1310.0 984.8 L1313.0 985.3 L1316.0 985.9 L1319.0 986.6 L1322.0 987.4 L1325.0 988.3 L1328.0 989.3 L1331.0 990.4 L1334.0 991.6 L1337.0 993.0 L1340.0 994.5 L1343.0 996.1 L1346.0 997.9 L1349.0 999.8 L1352.0 1001.9 L1355.0 1004.1 L1358.0 1006.4 L1361.0 1008.9 L1364.0 1011.6 L1367.0 1014.4 L1370.0 1017.4 L1373.0 1020.6 L1376.0 1024.0 L1379.0 1027.5 L1382.0 1031.2 L1385.0 1035.1 L1388.0 1039.2 L1391.0 1043.5 L1394.0 1048.0 L1397.0 1052.6 L1400.0 1057.4 L1403.0 1062.3 L1406.0 1067.3 L1409.0 1072.5 L1412.0 1077.7 L1415.0 1082.9 L1418.0 1088.3 L1421.0 1093.6 L1424.0 1099.0 L1427.0 1104.4 L1430.0 1109.8 L1433.0 1115.2 L1436.0 1120.5 L1439.0 1125.8 L1442.0 1131.0 L1445.0 1136.1 L1448.0 1141.1 L1451.0 1146.0 L1454.0 1150.7 L1457.0 1155.4 L1460.0 1159.8 L1463.0 1164.1 L1466.0 1168.2 L1469.0 1172.2 L1472.0 1175.9 L1475.0 1179.5 L1478.0 1182.9 L1481.0 1186.2 L1484.0 1189.3 L1487.0 1192.2 L1490.0 1194.9 L1493.0 1197.5 L1496.0 1200.0 L1499.0 1202.2 L1502.0 1204.3 L1505.0 1206.3 L1508.0 1208.1 L1511.0 1209.7 L1514.0 1211.2 L1517.0 1212.6 L1520.0 1213.8 L1523.0 1214.8 L1526.0 1215.7 L1529.0 1216.5 L1532.0 1217.1 L1535.0 1217.5 L1538.0 1217.9 L1541.0 1218.0 L1544.0 1218.1 L1547.0 1218.0 L1550.0 1217.8 L1553.0 1217.4 L1556.0 1216.9 L1559.0 1216.3 L1562.0 1215.5 L1565.0 1214.6 L1568.0 1213.6 L1571.0 1212.5 L1574.0 1211.2 L1577.0 1209.8 L1580.0 1208.3 L1583.0 1206.7 L1586.0 1205.0 L1589.0 1203.1 L1592.0 1201.1 L1595.0 1199.0 L1598.0 1196.8 L1601.0 1194.5 L1604.0 1192.1 L1607.0 1189.5 L1610.0 1186.9 L1613.0 1184.2 L1616.0 1181.3 L1619.0 1178.3 L1622.0 1175.3 L1625.0 1172.1 L1628.0 1168.9 L1631.0 1165.5 L1634.0 1162.1 L1637.0 1158.6 L1640.0 1155.0 L1643.0 1151.4 L1646.0 1147.7 L1649.0 1144.1 L1652.0 1140.4 L1655.0 1136.7 L1658.0 1133.1 L1661.0 1129.5 L1664.0 1126.0 L1667.0 1122.4 L1670.0 1119.0 L1673.0 1115.5 L1676.0 1112.2 L1679.0 1108.9 L1682.0 1105.6 L1685.0 1102.4 L1688.0 1099.3 L1691.0 1096.3 L1694.0 1093.3 L1697.0 1090.4 L1700.0 1087.7 L1703.0 1085.0 L1706.0 1082.4 L1709.0 1079.9 L1712.0 1077.5 L1715.0 1075.3 L1718.0 1073.1 L1721.0 1071.1 L1724.0 1069.2 L1727.0 1067.4 L1730.0 1065.7 L1733.0 1064.2 L1736.0 1062.7 L1739.0 1061.3 L1742.0 1060.1 L1745.0 1058.9 L1748.0 1057.9 L1751.0 1056.9 L1754.0 1056.0 L1757.0 1055.3 L1760.0 1054.6 L1763.0 1054.0 L1766.0 1053.5 L1769.0 1053.1 L1772.0 1052.8 L1775.0 1052.5 L1778.0 1052.3 L1781.0 1052.3 L1784.0 1052.2 L1787.0 1052.3 L1790.0 1052.4 L1793.0 1052.6 L1796.0 1052.9 L1799.0 1053.2 L1802.0 1053.6 L1805.0 1054.0 L1808.0 1054.6 L1811.0 1055.1 L1814.0 1055.7 L1817.0 1056.4 L1820.0 1057.1 L1823.0 1057.9 L1826.0 1058.8 L1829.0 1059.6 L1832.0 1060.5 L1835.0 1061.5 L1838.0 1062.5 L1841.0 1063.5 L1844.0 1064.6 L1847.0 1065.7 L1850.0 1066.8 L1853.0 1067.9 L1856.0 1069.1 L1859.0 1070.3 L1862.0 1071.6 L1865.0 1072.8 L1868.0 1074.1 L1871.0 1075.3 L1874.0 1076.6 L1877.0 1077.9 L1880.0 1079.2 L1883.0 1080.5 L1886.0 1081.8 L1889.0 1083.0 L1892.0 1084.3 L1895.0 1085.5 L1898.0 1086.7 L1901.0 1087.9 L1904.0 1089.1 L1907.0 1090.3 L1910.0 1091.4 L1913.0 1092.4 L1916.0 1093.5 L1919.0 1094.5 L1922.0 1095.4 L1925.0 1096.3 L1928.0 1097.2 L1931.0 1098.0 L1934.0 1098.7 L1937.0 1099.5 L1940.0 1100.2 L1943.0 1100.8 L1946.0 1101.4 L1949.0 1102.0 L1952.0 1102.6 L1955.0 1103.1 L1958.0 1103.6 L1961.0 1104.0 L1964.0 1104.4 L1967.0 1104.8 L1970.0 1105.2 L1973.0 1105.5 L1976.0 1105.8 L1979.0 1106.1 L1982.0 1106.4 L1985.0 1106.6 L1988.0 1106.8 L1991.0 1107.0 L1994.0 1107.2 L1997.0 1107.4 L2000.0 1107.5 L2003.0 1107.6 L2006.0 1107.8 L2009.0 1107.9 L2012.0 1107.9 L2015.0 1108.0 L2018.0 1108.1 L2021.0 1108.1 L2024.0 1108.2 L2027.0 1108.2 L2030.0 1108.2 L2033.0 1108.2 L2036.0 1108.2 L2039.0 1108.2 L2042.0 1108.2 L2045.0 1108.1 L2048.0 1108.0 L2051.0 1108.0 L2054.0 1107.8 L2057.0 1107.7 L2060.0 1107.6 L2063.0 1107.4 L2066.0 1107.2 L2069.0 1107.0 L2072.0 1106.7 L2075.0 1106.4 L2078.0 1106.1 L2081.0 1105.8 L2084.0 1105.4 L2087.0 1105.0 L2090.0 1104.6 L2093.0 1104.1 L2096.0 1103.6 L2099.0 1103.1 L2102.0 1102.6 L2105.0 1102.1 L2108.0 1101.5 L2111.0 1100.9 L2114.0 1100.3 L2117.0 1099.7 L2120.0 1099.0 L2123.0 1098.4 L2126.0 1097.7 L2129.0 1097.1 L2132.0 1096.4 L2135.0 1095.7 L2138.0 1095.0 L2141.0 1094.3 L2144.0 1093.6 L2147.0 1092.9 L2150.0 1092.2 L2153.0 1091.5 L2156.0 1090.8 L2159.0 1090.1 L2162.0 1089.4 L2165.0 1088.7 L2168.0 1088.0 L2171.0 1087.3 L2174.0 1086.7 L2177.0 1086.0 L2180.0 1085.4 L2183.0 1084.8 L2186.0 1084.2 L2189.0 1083.6 L2192.0 1083.0 L2195.0 1082.5 L2198.0 1081.9 L2201.0 1081.4 L2204.0 1080.9 L2207.0 1080.5 L2210.0 1080.0 L2213.0 1079.6 L2216.0 1079.3 L2219.0 1078.9 L2222.0 1078.6 L2225.0 1078.3 L2228.0 1078.1 L2231.0 1077.9 L2234.0 1077.7 L2237.0 1077.6 L2240.0 1077.5 L2243.0 1077.4 L2246.0 1077.4 L2249.0 1077.4 L2252.0 1077.5 L2255.0 1077.7 L2258.0 1077.8 L2261.0 1078.1 L2264.0 1078.3 L2267.0 1078.7 L2270.0 1079.0 L2273.0 1079.5 L2276.0 1079.9 L2279.0 1080.4 L2282.0 1081.0 L2285.0 1081.6 L2288.0 1082.2 L2291.0 1082.9 L2294.0 1083.6 L2297.0 1084.4 L2300.0 1085.2 L2303.0 1086.0 L2306.0 1086.9 L2309.0 1087.8 L2312.0 1088.7 L2315.0 1089.7 L2318.0 1090.7 L2321.0 1091.7 L2324.0 1092.8 L2327.0 1093.9 L2330.0 1095.0 L2333.0 1096.1 L2336.0 1097.3 L2339.0 1098.5 L2342.0 1099.7 L2345.0 1100.9 L2348.0 1102.1 L2351.0 1103.4 L2354.0 1104.7 L2357.0 1106.0 L2360.0 1107.3 L2363.0 1108.7 L2366.0 1110.0 L2369.0 1111.4 L2372.0 1112.8 L2375.0 1114.2 L2378.0 1115.6 L2381.0 1117.0 L2384.0 1118.4 L2387.0 1119.9 L2390.0 1121.3 L2393.0 1122.7 L2396.0 1124.2 L2399.0 1125.6 L2402.0 1127.1 L2405.0 1128.6 L2408.0 1130.0 L2411.0 1131.5 L2414.0 1133.0 L2417.0 1134.4 L2420.0 1135.9 L2423.0 1137.4 L2426.0 1138.9 L2429.0 1140.3 L2432.0 1141.8 L2435.0 1143.3 L2438.0 1144.8 L2441.0 1146.2 L2444.0 1147.7 L2447.0 1149.1 L2450.0 1150.6 L2453.0 1152.0 L2456.0 1153.5 L2459.0 1154.9 L2462.0 1156.3 L2465.0 1157.7 L2468.0 1159.1 L2471.0 1160.5 L2474.0 1161.9 L2477.0 1163.2 L2480.0 1164.6 L2483.0 1165.9 L2486.0 1167.3 L2489.0 1168.6 L2492.0 1169.9 L2495.0 1171.2 L2498.0 1172.4 L2501.0 1173.7 L2504.0 1174.9 L2507.0 1176.1 L2510.0 1177.3 L2513.0 1178.5 L2516.0 1179.7 L2519.0 1180.8 L2522.0 1181.9 L2525.0 1183.0 L2528.0 1184.1 L2531.0 1185.1 L2534.0 1186.1 L2537.0 1187.1 L2540.0 1188.1 L2543.0 1189.0 L2546.0 1190.0 L2549.0 1190.9 L2552.0 1191.7 L2555.0 1192.6 L2558.0 1193.4 L2561.0 1194.1 L2564.0 1194.9 L2567.0 1195.6 L2570.0 1196.3 L2573.0 1196.9 L2576.0 1197.5 L2579.0 1198.1 L2582.0 1198.7 L2585.0 1199.2 L2588.0 1199.7 L2591.0 1200.1 L2594.0 1200.5 L2597.0 1200.9 L2600.0 1201.2 L2603.0 1201.5 L2606.0 1201.7 L2609.0 1201.9 L2612.0 1202.1 L2615.0 1202.2 L2618.0 1202.3 L2621.0 1202.3 L2624.0 1202.3 L2627.0 1202.3 L2630.0 1202.2" fill="none" stroke="#5a93e6"/>
    <path d="M575.0 1158.5 L578.0 1157.0 L581.0 1155.4 L584.0 1153.9 L587.0 1152.4 L590.0 1150.9 L593.0 1149.4 L596.0 1147.9 L599.0 1146.4 L602.0 1144.9 L605.0 1143.4 L608.0 1142.0 L611.0 1140.5 L614.0 1139.0 L617.0 1137.6 L620.0 1136.2 L623.0 1134.7 L626.0 1133.3 L629.0 1131.9 L632.0 1130.5 L635.0 1129.2 L638.0 1127.8 L641.0 1126.5 L644.0 1125.1 L647.0 1123.8 L650.0 1122.5 L653.0 1121.3 L656.0 1120.0 L659.0 1118.8 L662.0 1117.5 L665.0 1116.3 L668.0 1115.1 L671.0 1114.0 L674.0 1112.8 L677.0 1111.7 L680.0 1110.6 L683.0 1109.5 L686.0 1108.5 L689.0 1107.5 L692.0 1106.5 L695.0 1105.5 L698.0 1104.5 L701.0 1103.6 L704.0 1102.7 L707.0 1101.8 L710.0 1101.0 L713.0 1100.2 L716.0 1099.4 L719.0 1098.6 L722.0 1097.9 L725.0 1097.2 L728.0 1096.5 L731.0 1095.9 L734.0 1095.3 L737.0 1094.7 L740.0 1094.2 L743.0 1093.7 L746.0 1093.2 L749.0 1092.8 L752.0 1092.3 L755.0 1091.9 L758.0 1091.6 L761.0 1091.2 L764.0 1090.9 L767.0 1090.6 L770.0 1090.3 L773.0 1090.0 L776.0 1089.7 L779.0 1089.4 L782.0 1089.2 L785.0 1088.9 L788.0 1088.7 L791.0 1088.5 L794.0 1088.3 L797.0 1088.0 L800.0 1087.8 L803.0 1087.6 L806.0 1087.4 L809.0 1087.2 L812.0 1086.9 L815.0 1086.7 L818.0 1086.5 L821.0 1086.2 L824.0 1086.0 L827.0 1085.7 L830.0 1085.4 L833.0 1085.1 L836.0 1084.8 L839.0 1084.5 L842.0 1084.1 L845.0 1083.7 L848.0 1083.4 L851.0 1082.9 L854.0 1082.5 L857.0 1082.0 L860.0 1081.5 L863.0 1081.0 L866.0 1080.5 L869.0 1079.9 L872.0 1079.3 L875.0 1078.6 L878.0 1077.9 L881.0 1077.2 L884.0 1076.4 L887.0 1075.6 L890.0 1074.8 L893.0 1073.9 L896.0 1072.9 L899.0 1072.0 L902.0 1070.9 L905.0 1069.8 L908.0 1068.7 L911.0 1067.5 L914.0 1066.3 L917.0 1065.0 L920.0 1063.6 L923.0 1062.2 L926.0 1060.8 L929.0 1059.3 L932.0 1057.8 L935.0 1056.3 L938.0 1054.7 L941.0 1053.1 L944.0 1051.5 L947.0 1049.8 L950.0 1048.2 L953.0 1046.6 L956.0 1044.9 L959.0 1043.3 L962.0 1041.6 L965.0 1040.0 L968.0 1038.4 L971.0 1036.7 L974.0 1035.2 L977.0 1033.6 L980.0 1032.1 L983.0 1030.6 L986.0 1029.1 L989.0 1027.7 L992.0 1026.3 L995.0 1025.0 L998.0 1023.7 L1001.0 1022.5 L1004.0 1021.4 L1007.0 1020.3 L1010.0 1019.2 L1013.0 1018.3 L1016.0 1017.4 L1019.0 1016.6 L1022.0 1015.8 L1025.0 1015.1 L1028.0 1014.5 L1031.0 1014.0 L1034.0 1013.5 L1037.0 1013.1 L1040.0 1012.7 L1043.0 1012.5 L1046.0 1012.3 L1049.0 1012.1 L1052.0 1012.1 L1055.0 1012.1 L1058.0 1012.1 L1061.0 1012.3 L1064.0 1012.4 L1067.0 1012.6 L1070.0 1012.7 L1073.0 1012.9 L1076.0 1013.1 L1079.0 1013.3 L1082.0 1013.5 L1085.0 1013.7 L1088.0 1013.9 L1091.0 1014.2 L1094.0 1014.5 L1097.0 1014.9 L1100.0 1015.4 L1103.0 1016.1 L1106.0 1016.8 L1109.0 1017.6 L1112.0 1018.6 L1115.0 1019.8 L1118.0 1021.2 L1121.0 1022.7 L1124.0 1024.4 L1127.0 1026.3 L1130.0 1028.4 L1133.0 1030.7 L1136.0 1033.2 L1139.0 1035.7 L1142.0 1038.5 L1145.0 1041.3 L1148.0 1044.2 L1151.0 1047.3 L1154.0 1050.4 L1157.0 1053.6 L1160.0 1056.8 L1163.0 1060.1 L1166.0 1063.4 L1169.0 1066.7 L1172.0 1070.0 L1175.0 1073.3 L1178.0 1076.6 L1181.0 1079.8 L1184.0 1083.0 L1187.0 1086.1 L1190.0 1089.1 L1193.0 1092.1 L1196.0 1094.9 L1199.0 1097.6 L1202.0 1100.2 L1205.0 1102.7 L1208.0 1105.1 L1211.0 1107.4 L1214.0 1109.6 L1217.0 1111.7 L1220.0 1113.7 L1223.0 1115.6 L1226.0 1117.3 L1229.0 1119.0 L1232.0 1120.7 L1235.0 1122.2 L1238.0 1123.6 L1241.0 1124.9 L1244.0 1126.2 L1247.0 1127.4 L1250.0 1128.5 L1253.0 1129.5 L1256.0 1130.4 L1259.0 1131.2 L1262.0 1132.0 L1265.0 1132.7 L1268.0 1133.3 L1271.0 1133.9 L1274.0 1134.4 L1277.0 1134.8 L1280.0 1135.1 L1283.0 1135.4 L1286.0 1135.7 L1289.0 1135.8 L1292.0 1135.9 L1295.0 1136.0 L1298.0 1136.0 L1301.0 1135.9 L1304.0 1135.8 L1307.0 1135.6 L1310.0 1135.4 L1313.0 1135.1 L1316.0 1134.8 L1319.0 1134.5 L1322.0 1134.1 L1325.0 1133.6 L1328.0 1133.2 L1331.0 1132.6 L1334.0 1132.1 L1337.0 1131.5 L1340.0 1130.9 L1343.0 1130.2 L1346.0 1129.5 L1349.0 1128.8 L1352.0 1128.1 L1355.0 1127.3 L1358.0 1126.6 L1361.0 1125.7 L1364.0 1124.8 L1367.0 1123.9 L1370.0 1122.8 L1373.0 1121.5 L1376.0 1120.1 L1379.0 1118.5 L1382.0 1116.7 L1385.0 1114.6 L1388.0 1112.3 L1391.0 1109.6 L1394.0 1106.6 L1397.0 1103.3 L1400.0 1099.6 L1403.0 1095.5 L1406.0 1091.0 L1409.0 1086.0 L1412.0 1080.5 L1415.0 1074.6 L1418.0 1068.1 L1421.0 1061.2 L1424.0 1054.1 L1427.0 1046.8 L1430.0 1039.5 L1433.0 1032.2 L1436.0 1025.1 L1439.0 1018.2 L1442.0 1011.6 L1445.0 1005.3 L1448.0 999.5 L1451.0 994.0 L1454.0 989.0 L1457.0 984.3 L1460.0 980.0 L1463.0 975.9 L1466.0 972.1 L1469.0 968.6 L1472.0 965.3 L1475.0 962.2 L1478.0 959.4 L1481.0 956.8 L1484.0 954.3 L1487.0 952.1 L1490.0 950.1 L1493.0 948.2 L1496.0 946.5 L1499.0 945.0 L1502.0 943.6 L1505.0 942.4 L1508.0 941.3 L1511.0 940.4 L1514.0 939.6 L1517.0 938.9 L1520.0 938.4 L1523.0 937.9 L1526.0 937.5 L1529.0 937.2 L1532.0 937.0 L1535.0 936.9 L1538.0 936.9 L1541.0 936.9 L1544.0 936.9 L1547.0 937.1 L1550.0 937.3 L1553.0 937.6 L1556.0 938.0 L1559.0 938.5 L1562.0 939.1 L1565.0 939.9 L1568.0 940.8 L1571.0 941.9 L1574.0 943.1 L1577.0 944.5 L1580.0 946.1 L1583.0 948.0 L1586.0 950.0 L1589.0 952.2 L1592.0 954.7 L1595.0 957.4 L1598.0 960.4 L1601.0 963.6 L1604.0 967.1 L1607.0 970.9 L1610.0 975.0 L1613.0 979.2 L1616.0 983.6 L1619.0 988.1 L1622.0 992.8 L1625.0 997.5 L1628.0 1002.2 L1631.0 1007.0 L1634.0 1011.8 L1637.0 1016.5 L1640.0 1021.2 L1643.0 1025.7 L1646.0 1030.1 L1649.0 1034.3 L1652.0 1038.3 L1655.0 1042.0 L1658.0 1045.5 L1661.0 1048.8 L1664.0 1051.7 L1667.0 1054.4 L1670.0 1056.9 L1673.0 1059.2 L1676.0 1061.3 L1679.0 1063.3 L1682.0 1065.1 L1685.0 1066.7 L1688.0 1068.2 L1691.0 1069.6 L1694.0 1070.9 L1697.0 1072.1 L1700.0 1073.3 L1703.0 1074.4 L1706.0 1075.4 L1709.0 1076.4 L1712.0 1077.4 L1715.0 1078.3 L1718.0 1079.1 L1721.0 1079.9 L1724.0 1080.7 L1727.0 1081.4 L1730.0 1082.0 L1733.0 1082.6 L1736.0 1083.2 L1739.0 1083.7 L1742.0 1084.2 L1745.0 1084.6 L1748.0 1085.0 L1751.0 1085.4 L1754.0 1085.7 L1757.0 1086.0 L1760.0 1086.2 L1763.0 1086.4 L1766.0 1086.5 L1769.0 1086.6 L1772.0 1086.7 L1775.0 1086.7 L1778.0 1086.7 L1781.0 1086.6 L1784.0 1086.5 L1787.0 1086.4 L1790.0 1086.2 L1793.0 1086.0 L1796.0 1085.7 L1799.0 1085.4 L1802.0 1085.0 L1805.0 1084.6 L1808.0 1084.2 L1811.0 1083.7 L1814.0 1083.2 L1817.0 1082.6 L1820.0 1082.0 L1823.0 1081.4 L1826.0 1080.7 L1829.0 1079.9 L1832.0 1079.2 L1835.0 1078.3 L1838.0 1077.5 L1841.0 1076.6 L1844.0 1075.6 L1847.0 1074.6 L1850.0 1073.6 L1853.0 1072.5 L1856.0 1071.3 L1859.0 1070.2 L1862.0 1069.0 L1865.0 1067.7 L1868.0 1066.4 L1871.0 1065.1 L1874.0 1063.7 L1877.0 1062.4 L1880.0 1061.0 L1883.0 1059.5 L1886.0 1058.1 L1889.0 1056.6 L1892.0 1055.2 L1895.0 1053.7 L1898.0 1052.2 L1901.0 1050.7 L1904.0 1049.2 L1907.0 1047.7 L1910.0 1046.2 L1913.0 1044.7 L1916.0 1043.2 L1919.0 1041.7 L1922.0 1040.3 L1925.0 1038.8 L1928.0 1037.4 L1931.0 1036.0 L1934.0 1034.7 L1937.0 1033.3 L1940.0 1032.0 L1943.0 1030.7 L1946.0 1029.5 L1949.0 1028.3 L1952.0 1027.1 L1955.0 1025.9 L1958.0 1024.8 L1961.0 1023.8 L1964.0 1022.7 L1967.0 1021.7 L1970.0 1020.8 L1973.0 1019.9 L1976.0 1019.0 L1979.0 1018.2 L1982.0 1017.4 L1985.0 1016.7 L1988.0 1016.0 L1991.0 1015.4 L1994.0 1014.8 L1997.0 1014.2 L2000.0 1013.8 L2003.0 1013.3 L2006.0 1013.0 L2009.0 1012.7 L2012.0 1012.4 L2015.0 1012.2 L2018.0 1012.1 L2021.0 1012.0 L2024.0 1012.0 L2027.0 1012.0 L2030.0 1012.1 L2033.0 1012.3 L2036.0 1012.6 L2039.0 1012.9 L2042.0 1013.2 L2045.0 1013.7 L2048.0 1014.2 L2051.0 1014.8 L2054.0 1015.5 L2057.0 1016.2 L2060.0 1017.0 L2063.0 1017.9 L2066.0 1018.9 L2069.0 1019.9 L2072.0 1021.1 L2075.0 1022.3 L2078.0 1023.6 L2081.0 1024.9 L2084.0 1026.4 L2087.0 1028.0 L2090.0 1029.6 L2093.0 1031.3 L2096.0 1033.1 L2099.0 1035.0 L2102.0 1037.0 L2105.0 1039.1 L2108.0 1041.3 L2111.0 1043.6 L2114.0 1045.9 L2117.0 1048.4 L2120.0 1051.0 L2123.0 1053.6 L2126.0 1056.4 L2129.0 1059.3 L2132.0 1062.2 L2135.0 1065.2 L2138.0 1068.2 L2141.0 1071.3 L2144.0 1074.4 L2147.0 1077.6 L2150.0 1080.7 L2153.0 1083.9 L2156.0 1087.0 L2159.0 1090.1 L2162.0 1093.2 L2165.0 1096.2 L2168.0 1099.1 L2171.0 1102.0 L2174.0 1104.8 L2177.0 1107.5 L2180.0 1110.1 L2183.0 1112.6 L2186.0 1115.0 L2189.0 1117.3 L2192.0 1119.5 L2195.0 1121.6 L2198.0 1123.6 L2201.0 1125.4 L2204.0 1127.2 L2207.0 1128.9 L2210.0 1130.4 L2213.0 1131.9 L2216.0 1133.3 L2219.0 1134.6 L2222.0 1135.8 L2225.0 1136.9 L2228.0 1137.9 L2231.0 1138.8 L2234.0 1139.6 L2237.0 1140.3 L2240.0 1141.0 L2243.0 1141.5 L2246.0 1142.0 L2249.0 1142.4 L2252.0 1142.7 L2255.0 1143.0 L2258.0 1143.1 L2261.0 1143.2 L2264.0 1143.2 L2267.0 1143.1 L2270.0 1142.9 L2273.0 1142.7 L2276.0 1142.4 L2279.0 1142.0 L2282.0 1141.5 L2285.0 1141.1 L2288.0 1140.5 L2291.0 1139.9 L2294.0 1139.2 L2297.0 1138.5 L2300.0 1137.8 L2303.0 1137.0 L2306.0 1136.1 L2309.0 1135.2 L2312.0 1134.3 L2315.0 1133.4 L2318.0 1132.4 L2321.0 1131.4 L2324.0 1130.4 L2327.0 1129.3 L2330.0 1128.2 L2333.0 1127.2 L2336.0 1126.1 L2339.0 1124.9 L2342.0 1123.8 L2345.0 1122.7 L2348.0 1121.6 L2351.0 1120.5 L2354.0 1119.3 L2357.0 1118.2 L2360.0 1117.1 L2363.0 1116.0 L2366.0 1114.9 L2369.0 1113.9 L2372.0 1112.8 L2375.0 1111.8 L2378.0 1110.8 L2381.0 1109.9 L2384.0 1108.9 L2387.0 1108.0 L2390.0 1107.1 L2393.0 1106.2 L2396.0 1105.3 L2399.0 1104.5 L2402.0 1103.7 L2405.0 1102.9 L2408.0 1102.1 L2411.0 1101.4 L2414.0 1100.7 L2417.0 1100.0 L2420.0 1099.3 L2423.0 1098.7 L2426.0 1098.1 L2429.0 1097.5 L2432.0 1096.9 L2435.0 1096.4 L2438.0 1095.9 L2441.0 1095.4 L2444.0 1094.9 L2447.0 1094.5 L2450.0 1094.1 L2453.0 1093.7 L2456.0 1093.3 L2459.0 1093.0 L2462.0 1092.7 L2465.0 1092.4 L2468.0 1092.2 L2471.0 1091.9 L2474.0 1091.7 L2477.0 1091.6 L2480.0 1091.4 L2483.0 1091.3 L2486.0 1091.2 L2489.0 1091.1 L2492.0 1091.1 L2495.0 1091.1 L2498.0 1091.1 L2501.0 1091.2 L2504.0 1091.2 L2507.0 1091.3 L2510.0 1091.5 L2513.0 1091.6 L2516.0 1091.8 L2519.0 1092.0 L2522.0 1092.3 L2525.0 1092.6 L2528.0 1092.9 L2531.0 1093.2 L2534.0 1093.6 L2537.0 1094.0 L2540.0 1094.4 L2543.0 1094.8 L2546.0 1095.3 L2549.0 1095.8 L2552.0 1096.4 L2555.0 1096.9 L2558.0 1097.5 L2561.0 1098.2 L2564.0 1098.8 L2567.0 1099.5 L2570.0 1100.2 L2573.0 1101.0 L2576.0 1101.8 L2579.0 1102.6 L2582.0 1103.5 L2585.0 1104.3 L2588.0 1105.2 L2591.0 1106.2 L2594.0 1107.2 L2597.0 1108.2 L2600.0 1109.2 L2603.0 1110.3 L2606.0 1111.4 L2609.0 1112.5 L2612.0 1113.7 L2615.0 1114.9 L2618.0 1116.1 L2621.0 1117.4 L2624.0 1118.7 L2627.0 1120.0 L2630.0 1121.4 L2630 1282 L575 1282 Z" fill="url(#go)"/>
    <path d="M575.0 1157.3 L578.0 1155.8 L581.0 1154.2 L584.0 1152.7 L587.0 1151.2 L590.0 1149.7 L593.0 1148.2 L596.0 1146.7 L599.0 1145.2 L602.0 1143.7 L605.0 1142.2 L608.0 1140.8 L611.0 1139.3 L614.0 1137.8 L617.0 1136.4 L620.0 1135.0 L623.0 1133.5 L626.0 1132.1 L629.0 1130.7 L632.0 1129.3 L635.0 1128.0 L638.0 1126.6 L641.0 1125.3 L644.0 1123.9 L647.0 1122.6 L650.0 1121.3 L653.0 1120.1 L656.0 1118.8 L659.0 1117.6 L662.0 1116.3 L665.0 1115.1 L668.0 1113.9 L671.0 1112.8 L674.0 1111.6 L677.0 1110.5 L680.0 1109.4 L683.0 1108.3 L686.0 1107.3 L689.0 1106.3 L692.0 1105.3 L695.0 1104.3 L698.0 1103.3 L701.0 1102.4 L704.0 1101.5 L707.0 1100.6 L710.0 1099.8 L713.0 1099.0 L716.0 1098.2 L719.0 1097.4 L722.0 1096.7 L725.0 1096.0 L728.0 1095.3 L731.0 1094.7 L734.0 1094.1 L737.0 1093.5 L740.0 1093.0 L743.0 1092.5 L746.0 1092.0 L749.0 1091.6 L752.0 1091.1 L755.0 1090.7 L758.0 1090.4 L761.0 1090.0 L764.0 1089.7 L767.0 1089.4 L770.0 1089.1 L773.0 1088.8 L776.0 1088.5 L779.0 1088.2 L782.0 1088.0 L785.0 1087.7 L788.0 1087.5 L791.0 1087.3 L794.0 1087.1 L797.0 1086.8 L800.0 1086.6 L803.0 1086.4 L806.0 1086.2 L809.0 1086.0 L812.0 1085.7 L815.0 1085.5 L818.0 1085.3 L821.0 1085.0 L824.0 1084.8 L827.0 1084.5 L830.0 1084.2 L833.0 1083.9 L836.0 1083.6 L839.0 1083.3 L842.0 1082.9 L845.0 1082.5 L848.0 1082.2 L851.0 1081.7 L854.0 1081.3 L857.0 1080.8 L860.0 1080.3 L863.0 1079.8 L866.0 1079.3 L869.0 1078.7 L872.0 1078.1 L875.0 1077.4 L878.0 1076.7 L881.0 1076.0 L884.0 1075.2 L887.0 1074.4 L890.0 1073.6 L893.0 1072.7 L896.0 1071.7 L899.0 1070.8 L902.0 1069.7 L905.0 1068.6 L908.0 1067.5 L911.0 1066.3 L914.0 1065.1 L917.0 1063.8 L920.0 1062.4 L923.0 1061.0 L926.0 1059.6 L929.0 1058.1 L932.0 1056.6 L935.0 1055.1 L938.0 1053.5 L941.0 1051.9 L944.0 1050.3 L947.0 1048.6 L950.0 1047.0 L953.0 1045.4 L956.0 1043.7 L959.0 1042.1 L962.0 1040.4 L965.0 1038.8 L968.0 1037.2 L971.0 1035.5 L974.0 1034.0 L977.0 1032.4 L980.0 1030.9 L983.0 1029.4 L986.0 1027.9 L989.0 1026.5 L992.0 1025.1 L995.0 1023.8 L998.0 1022.5 L1001.0 1021.3 L1004.0 1020.2 L1007.0 1019.1 L1010.0 1018.0 L1013.0 1017.1 L1016.0 1016.2 L1019.0 1015.4 L1022.0 1014.6 L1025.0 1013.9 L1028.0 1013.3 L1031.0 1012.8 L1034.0 1012.3 L1037.0 1011.9 L1040.0 1011.5 L1043.0 1011.3 L1046.0 1011.1 L1049.0 1010.9 L1052.0 1010.9 L1055.0 1010.9 L1058.0 1010.9 L1061.0 1011.1 L1064.0 1011.2 L1067.0 1011.4 L1070.0 1011.5 L1073.0 1011.7 L1076.0 1011.9 L1079.0 1012.1 L1082.0 1012.3 L1085.0 1012.5 L1088.0 1012.7 L1091.0 1013.0 L1094.0 1013.3 L1097.0 1013.7 L1100.0 1014.2 L1103.0 1014.9 L1106.0 1015.6 L1109.0 1016.4 L1112.0 1017.4 L1115.0 1018.6 L1118.0 1020.0 L1121.0 1021.5 L1124.0 1023.2 L1127.0 1025.1 L1130.0 1027.2 L1133.0 1029.5 L1136.0 1032.0 L1139.0 1034.5 L1142.0 1037.3 L1145.0 1040.1 L1148.0 1043.0 L1151.0 1046.1 L1154.0 1049.2 L1157.0 1052.4 L1160.0 1055.6 L1163.0 1058.9 L1166.0 1062.2 L1169.0 1065.5 L1172.0 1068.8 L1175.0 1072.1 L1178.0 1075.4 L1181.0 1078.6 L1184.0 1081.8 L1187.0 1084.9 L1190.0 1087.9 L1193.0 1090.9 L1196.0 1093.7 L1199.0 1096.4 L1202.0 1099.0 L1205.0 1101.5 L1208.0 1103.9 L1211.0 1106.2 L1214.0 1108.4 L1217.0 1110.5 L1220.0 1112.5 L1223.0 1114.4 L1226.0 1116.1 L1229.0 1117.8 L1232.0 1119.5 L1235.0 1121.0 L1238.0 1122.4 L1241.0 1123.7 L1244.0 1125.0 L1247.0 1126.2 L1250.0 1127.3 L1253.0 1128.3 L1256.0 1129.2 L1259.0 1130.0 L1262.0 1130.8 L1265.0 1131.5 L1268.0 1132.1 L1271.0 1132.7 L1274.0 1133.2 L1277.0 1133.6 L1280.0 1133.9 L1283.0 1134.2 L1286.0 1134.5 L1289.0 1134.6 L1292.0 1134.7 L1295.0 1134.8 L1298.0 1134.8 L1301.0 1134.7 L1304.0 1134.6 L1307.0 1134.4 L1310.0 1134.2 L1313.0 1133.9 L1316.0 1133.6 L1319.0 1133.3 L1322.0 1132.9 L1325.0 1132.4 L1328.0 1132.0 L1331.0 1131.4 L1334.0 1130.9 L1337.0 1130.3 L1340.0 1129.7 L1343.0 1129.0 L1346.0 1128.3 L1349.0 1127.6 L1352.0 1126.9 L1355.0 1126.1 L1358.0 1125.4 L1361.0 1124.5 L1364.0 1123.6 L1367.0 1122.7 L1370.0 1121.6 L1373.0 1120.3 L1376.0 1118.9 L1379.0 1117.3 L1382.0 1115.5 L1385.0 1113.4 L1388.0 1111.1 L1391.0 1108.4 L1394.0 1105.4 L1397.0 1102.1 L1400.0 1098.4 L1403.0 1094.3 L1406.0 1089.8 L1409.0 1084.8 L1412.0 1079.3 L1415.0 1073.4 L1418.0 1066.9 L1421.0 1060.0 L1424.0 1052.9 L1427.0 1045.6 L1430.0 1038.3 L1433.0 1031.0 L1436.0 1023.9 L1439.0 1017.0 L1442.0 1010.4 L1445.0 1004.1 L1448.0 998.3 L1451.0 992.8 L1454.0 987.8 L1457.0 983.1 L1460.0 978.8 L1463.0 974.7 L1466.0 970.9 L1469.0 967.4 L1472.0 964.1 L1475.0 961.0 L1478.0 958.2 L1481.0 955.6 L1484.0 953.1 L1487.0 950.9 L1490.0 948.9 L1493.0 947.0 L1496.0 945.3 L1499.0 943.8 L1502.0 942.4 L1505.0 941.2 L1508.0 940.1 L1511.0 939.2 L1514.0 938.4 L1517.0 937.7 L1520.0 937.2 L1523.0 936.7 L1526.0 936.3 L1529.0 936.0 L1532.0 935.8 L1535.0 935.7 L1538.0 935.7 L1541.0 935.7 L1544.0 935.7 L1547.0 935.9 L1550.0 936.1 L1553.0 936.4 L1556.0 936.8 L1559.0 937.3 L1562.0 937.9 L1565.0 938.7 L1568.0 939.6 L1571.0 940.7 L1574.0 941.9 L1577.0 943.3 L1580.0 944.9 L1583.0 946.8 L1586.0 948.8 L1589.0 951.0 L1592.0 953.5 L1595.0 956.2 L1598.0 959.2 L1601.0 962.4 L1604.0 965.9 L1607.0 969.7 L1610.0 973.8 L1613.0 978.0 L1616.0 982.4 L1619.0 986.9 L1622.0 991.6 L1625.0 996.3 L1628.0 1001.0 L1631.0 1005.8 L1634.0 1010.6 L1637.0 1015.3 L1640.0 1020.0 L1643.0 1024.5 L1646.0 1028.9 L1649.0 1033.1 L1652.0 1037.1 L1655.0 1040.8 L1658.0 1044.3 L1661.0 1047.6 L1664.0 1050.5 L1667.0 1053.2 L1670.0 1055.7 L1673.0 1058.0 L1676.0 1060.1 L1679.0 1062.1 L1682.0 1063.9 L1685.0 1065.5 L1688.0 1067.0 L1691.0 1068.4 L1694.0 1069.7 L1697.0 1070.9 L1700.0 1072.1 L1703.0 1073.2 L1706.0 1074.2 L1709.0 1075.2 L1712.0 1076.2 L1715.0 1077.1 L1718.0 1077.9 L1721.0 1078.7 L1724.0 1079.5 L1727.0 1080.2 L1730.0 1080.8 L1733.0 1081.4 L1736.0 1082.0 L1739.0 1082.5 L1742.0 1083.0 L1745.0 1083.4 L1748.0 1083.8 L1751.0 1084.2 L1754.0 1084.5 L1757.0 1084.8 L1760.0 1085.0 L1763.0 1085.2 L1766.0 1085.3 L1769.0 1085.4 L1772.0 1085.5 L1775.0 1085.5 L1778.0 1085.5 L1781.0 1085.4 L1784.0 1085.3 L1787.0 1085.2 L1790.0 1085.0 L1793.0 1084.8 L1796.0 1084.5 L1799.0 1084.2 L1802.0 1083.8 L1805.0 1083.4 L1808.0 1083.0 L1811.0 1082.5 L1814.0 1082.0 L1817.0 1081.4 L1820.0 1080.8 L1823.0 1080.2 L1826.0 1079.5 L1829.0 1078.7 L1832.0 1078.0 L1835.0 1077.1 L1838.0 1076.3 L1841.0 1075.4 L1844.0 1074.4 L1847.0 1073.4 L1850.0 1072.4 L1853.0 1071.3 L1856.0 1070.1 L1859.0 1069.0 L1862.0 1067.8 L1865.0 1066.5 L1868.0 1065.2 L1871.0 1063.9 L1874.0 1062.5 L1877.0 1061.2 L1880.0 1059.8 L1883.0 1058.3 L1886.0 1056.9 L1889.0 1055.4 L1892.0 1054.0 L1895.0 1052.5 L1898.0 1051.0 L1901.0 1049.5 L1904.0 1048.0 L1907.0 1046.5 L1910.0 1045.0 L1913.0 1043.5 L1916.0 1042.0 L1919.0 1040.5 L1922.0 1039.1 L1925.0 1037.6 L1928.0 1036.2 L1931.0 1034.8 L1934.0 1033.5 L1937.0 1032.1 L1940.0 1030.8 L1943.0 1029.5 L1946.0 1028.3 L1949.0 1027.1 L1952.0 1025.9 L1955.0 1024.7 L1958.0 1023.6 L1961.0 1022.6 L1964.0 1021.5 L1967.0 1020.5 L1970.0 1019.6 L1973.0 1018.7 L1976.0 1017.8 L1979.0 1017.0 L1982.0 1016.2 L1985.0 1015.5 L1988.0 1014.8 L1991.0 1014.2 L1994.0 1013.6 L1997.0 1013.0 L2000.0 1012.6 L2003.0 1012.1 L2006.0 1011.8 L2009.0 1011.5 L2012.0 1011.2 L2015.0 1011.0 L2018.0 1010.9 L2021.0 1010.8 L2024.0 1010.8 L2027.0 1010.8 L2030.0 1010.9 L2033.0 1011.1 L2036.0 1011.4 L2039.0 1011.7 L2042.0 1012.0 L2045.0 1012.5 L2048.0 1013.0 L2051.0 1013.6 L2054.0 1014.3 L2057.0 1015.0 L2060.0 1015.8 L2063.0 1016.7 L2066.0 1017.7 L2069.0 1018.7 L2072.0 1019.9 L2075.0 1021.1 L2078.0 1022.4 L2081.0 1023.7 L2084.0 1025.2 L2087.0 1026.8 L2090.0 1028.4 L2093.0 1030.1 L2096.0 1031.9 L2099.0 1033.8 L2102.0 1035.8 L2105.0 1037.9 L2108.0 1040.1 L2111.0 1042.4 L2114.0 1044.7 L2117.0 1047.2 L2120.0 1049.8 L2123.0 1052.4 L2126.0 1055.2 L2129.0 1058.1 L2132.0 1061.0 L2135.0 1064.0 L2138.0 1067.0 L2141.0 1070.1 L2144.0 1073.2 L2147.0 1076.4 L2150.0 1079.5 L2153.0 1082.7 L2156.0 1085.8 L2159.0 1088.9 L2162.0 1092.0 L2165.0 1095.0 L2168.0 1097.9 L2171.0 1100.8 L2174.0 1103.6 L2177.0 1106.3 L2180.0 1108.9 L2183.0 1111.4 L2186.0 1113.8 L2189.0 1116.1 L2192.0 1118.3 L2195.0 1120.4 L2198.0 1122.4 L2201.0 1124.2 L2204.0 1126.0 L2207.0 1127.7 L2210.0 1129.2 L2213.0 1130.7 L2216.0 1132.1 L2219.0 1133.4 L2222.0 1134.6 L2225.0 1135.7 L2228.0 1136.7 L2231.0 1137.6 L2234.0 1138.4 L2237.0 1139.1 L2240.0 1139.8 L2243.0 1140.3 L2246.0 1140.8 L2249.0 1141.2 L2252.0 1141.5 L2255.0 1141.8 L2258.0 1141.9 L2261.0 1142.0 L2264.0 1142.0 L2267.0 1141.9 L2270.0 1141.7 L2273.0 1141.5 L2276.0 1141.2 L2279.0 1140.8 L2282.0 1140.3 L2285.0 1139.9 L2288.0 1139.3 L2291.0 1138.7 L2294.0 1138.0 L2297.0 1137.3 L2300.0 1136.6 L2303.0 1135.8 L2306.0 1134.9 L2309.0 1134.0 L2312.0 1133.1 L2315.0 1132.2 L2318.0 1131.2 L2321.0 1130.2 L2324.0 1129.2 L2327.0 1128.1 L2330.0 1127.0 L2333.0 1126.0 L2336.0 1124.9 L2339.0 1123.7 L2342.0 1122.6 L2345.0 1121.5 L2348.0 1120.4 L2351.0 1119.3 L2354.0 1118.1 L2357.0 1117.0 L2360.0 1115.9 L2363.0 1114.8 L2366.0 1113.7 L2369.0 1112.7 L2372.0 1111.6 L2375.0 1110.6 L2378.0 1109.6 L2381.0 1108.7 L2384.0 1107.7 L2387.0 1106.8 L2390.0 1105.9 L2393.0 1105.0 L2396.0 1104.1 L2399.0 1103.3 L2402.0 1102.5 L2405.0 1101.7 L2408.0 1100.9 L2411.0 1100.2 L2414.0 1099.5 L2417.0 1098.8 L2420.0 1098.1 L2423.0 1097.5 L2426.0 1096.9 L2429.0 1096.3 L2432.0 1095.7 L2435.0 1095.2 L2438.0 1094.7 L2441.0 1094.2 L2444.0 1093.7 L2447.0 1093.3 L2450.0 1092.9 L2453.0 1092.5 L2456.0 1092.1 L2459.0 1091.8 L2462.0 1091.5 L2465.0 1091.2 L2468.0 1091.0 L2471.0 1090.7 L2474.0 1090.5 L2477.0 1090.4 L2480.0 1090.2 L2483.0 1090.1 L2486.0 1090.0 L2489.0 1089.9 L2492.0 1089.9 L2495.0 1089.9 L2498.0 1089.9 L2501.0 1090.0 L2504.0 1090.0 L2507.0 1090.1 L2510.0 1090.3 L2513.0 1090.4 L2516.0 1090.6 L2519.0 1090.8 L2522.0 1091.1 L2525.0 1091.4 L2528.0 1091.7 L2531.0 1092.0 L2534.0 1092.4 L2537.0 1092.8 L2540.0 1093.2 L2543.0 1093.6 L2546.0 1094.1 L2549.0 1094.6 L2552.0 1095.2 L2555.0 1095.7 L2558.0 1096.3 L2561.0 1097.0 L2564.0 1097.6 L2567.0 1098.3 L2570.0 1099.0 L2573.0 1099.8 L2576.0 1100.6 L2579.0 1101.4 L2582.0 1102.3 L2585.0 1103.1 L2588.0 1104.0 L2591.0 1105.0 L2594.0 1106.0 L2597.0 1107.0 L2600.0 1108.0 L2603.0 1109.1 L2606.0 1110.2 L2609.0 1111.3 L2612.0 1112.5 L2615.0 1113.7 L2618.0 1114.9 L2621.0 1116.2 L2624.0 1117.5 L2627.0 1118.8 L2630.0 1120.2" fill="none" stroke="#fd9d46"/>
    <path d="M575.0 1142.4 L578.0 1142.2 L581.0 1142.1 L584.0 1142.2 L587.0 1142.4 L590.0 1142.7 L593.0 1143.2 L596.0 1143.9 L599.0 1144.7 L602.0 1145.7 L605.0 1146.9 L608.0 1148.2 L611.0 1149.8 L614.0 1151.5 L617.0 1153.3 L620.0 1155.4 L623.0 1157.6 L626.0 1159.9 L629.0 1162.3 L632.0 1164.9 L635.0 1167.6 L638.0 1170.4 L641.0 1173.3 L644.0 1176.3 L647.0 1179.3 L650.0 1182.4 L653.0 1185.6 L656.0 1188.8 L659.0 1192.1 L662.0 1195.4 L665.0 1198.6 L668.0 1201.9 L671.0 1205.2 L674.0 1208.5 L677.0 1211.8 L680.0 1215.0 L683.0 1218.2 L686.0 1221.4 L689.0 1224.4 L692.0 1227.4 L695.0 1230.4 L698.0 1233.2 L701.0 1236.0 L704.0 1238.6 L707.0 1241.2 L710.0 1243.7 L713.0 1246.1 L716.0 1248.4 L719.0 1250.6 L722.0 1252.8 L725.0 1254.8 L728.0 1256.8 L731.0 1258.7 L734.0 1260.5 L737.0 1262.3 L740.0 1263.9 L743.0 1265.5 L746.0 1267.0 L749.0 1268.5 L752.0 1269.9 L755.0 1271.2 L758.0 1272.4 L761.0 1273.6 L764.0 1274.7 L767.0 1275.7 L770.0 1276.7 L773.0 1277.6 L776.0 1278.4 L779.0 1279.2 L782.0 1279.9 L785.0 1280.6 L788.0 1281.2 L791.0 1281.7 L794.0 1282.0 L797.0 1282.0 L800.0 1282.0 L803.0 1282.0 L806.0 1282.0 L809.0 1282.0 L812.0 1282.0 L815.0 1282.0 L818.0 1282.0 L821.0 1282.0 L824.0 1282.0 L827.0 1282.0 L830.0 1282.0 L833.0 1282.0 L836.0 1282.0 L839.0 1282.0 L842.0 1282.0 L845.0 1282.0 L848.0 1282.0 L851.0 1282.0 L854.0 1282.0 L857.0 1281.6 L860.0 1281.1 L863.0 1280.6 L866.0 1280.1 L869.0 1279.6 L872.0 1279.0 L875.0 1278.4 L878.0 1277.8 L881.0 1277.2 L884.0 1276.5 L887.0 1275.8 L890.0 1275.0 L893.0 1274.2 L896.0 1273.4 L899.0 1272.6 L902.0 1271.7 L905.0 1270.7 L908.0 1269.8 L911.0 1268.8 L914.0 1267.7 L917.0 1266.6 L920.0 1265.5 L923.0 1264.3 L926.0 1263.1 L929.0 1261.8 L932.0 1260.5 L935.0 1259.1 L938.0 1257.7 L941.0 1256.3 L944.0 1254.8 L947.0 1253.2 L950.0 1251.7 L953.0 1250.1 L956.0 1248.5 L959.0 1246.9 L962.0 1245.2 L965.0 1243.6 L968.0 1242.0 L971.0 1240.4 L974.0 1238.8 L977.0 1237.2 L980.0 1235.7 L983.0 1234.1 L986.0 1232.7 L989.0 1231.2 L992.0 1229.8 L995.0 1228.5 L998.0 1227.2 L1001.0 1226.0 L1004.0 1224.9 L1007.0 1223.8 L1010.0 1222.8 L1013.0 1221.9 L1016.0 1221.1 L1019.0 1220.2 L1022.0 1219.5 L1025.0 1218.8 L1028.0 1218.1 L1031.0 1217.4 L1034.0 1216.8 L1037.0 1216.2 L1040.0 1215.6 L1043.0 1215.0 L1046.0 1214.4 L1049.0 1213.8 L1052.0 1213.2 L1055.0 1212.6 L1058.0 1211.9 L1061.0 1211.3 L1064.0 1210.6 L1067.0 1209.8 L1070.0 1209.0 L1073.0 1208.2 L1076.0 1207.3 L1079.0 1206.3 L1082.0 1205.3 L1085.0 1204.2 L1088.0 1203.0 L1091.0 1201.8 L1094.0 1200.4 L1097.0 1198.9 L1100.0 1197.4 L1103.0 1195.7 L1106.0 1193.9 L1109.0 1192.0 L1112.0 1190.0 L1115.0 1187.8 L1118.0 1185.5 L1121.0 1183.0 L1124.0 1180.4 L1127.0 1177.7 L1130.0 1174.8 L1133.0 1171.8 L1136.0 1168.6 L1139.0 1165.4 L1142.0 1162.0 L1145.0 1158.5 L1148.0 1155.0 L1151.0 1151.3 L1154.0 1147.6 L1157.0 1143.8 L1160.0 1140.0 L1163.0 1136.1 L1166.0 1132.1 L1169.0 1128.1 L1172.0 1124.1 L1175.0 1120.1 L1178.0 1116.1 L1181.0 1112.0 L1184.0 1108.0 L1187.0 1103.9 L1190.0 1099.9 L1193.0 1096.0 L1196.0 1092.0 L1199.0 1088.1 L1202.0 1084.3 L1205.0 1080.5 L1208.0 1076.8 L1211.0 1073.2 L1214.0 1069.6 L1217.0 1066.2 L1220.0 1062.8 L1223.0 1059.5 L1226.0 1056.4 L1229.0 1053.4 L1232.0 1050.5 L1235.0 1047.8 L1238.0 1045.2 L1241.0 1042.8 L1244.0 1040.5 L1247.0 1038.5 L1250.0 1036.6 L1253.0 1034.8 L1256.0 1033.3 L1259.0 1031.9 L1262.0 1030.6 L1265.0 1029.5 L1268.0 1028.6 L1271.0 1027.7 L1274.0 1027.0 L1277.0 1026.5 L1280.0 1026.0 L1283.0 1025.7 L1286.0 1025.4 L1289.0 1025.3 L1292.0 1025.2 L1295.0 1025.2 L1298.0 1025.3 L1301.0 1025.5 L1304.0 1025.7 L1307.0 1026.1 L1310.0 1026.5 L1313.0 1027.0 L1316.0 1027.6 L1319.0 1028.4 L1322.0 1029.2 L1325.0 1030.2 L1328.0 1031.3 L1331.0 1032.5 L1334.0 1033.8 L1337.0 1035.3 L1340.0 1037.0 L1343.0 1038.8 L1346.0 1040.7 L1349.0 1042.8 L1352.0 1045.0 L1355.0 1047.3 L1358.0 1049.7 L1361.0 1052.2 L1364.0 1054.7 L1367.0 1057.4 L1370.0 1060.1 L1373.0 1062.9 L1376.0 1065.6 L1379.0 1068.5 L1382.0 1071.3 L1385.0 1074.2 L1388.0 1077.1 L1391.0 1080.1 L1394.0 1083.0 L1397.0 1085.9 L1400.0 1088.9 L1403.0 1091.8 L1406.0 1094.7 L1409.0 1097.6 L1412.0 1100.5 L1415.0 1103.3 L1418.0 1106.2 L1421.0 1108.9 L1424.0 1111.7 L1427.0 1114.4 L1430.0 1117.0 L1433.0 1119.6 L1436.0 1122.1 L1439.0 1124.5 L1442.0 1126.9 L1445.0 1129.1 L1448.0 1131.3 L1451.0 1133.4 L1454.0 1135.4 L1457.0 1137.3 L1460.0 1139.1 L1463.0 1140.9 L1466.0 1142.5 L1469.0 1144.0 L1472.0 1145.5 L1475.0 1146.9 L1478.0 1148.2 L1481.0 1149.4 L1484.0 1150.5 L1487.0 1151.6 L1490.0 1152.6 L1493.0 1153.5 L1496.0 1154.4 L1499.0 1155.1 L1502.0 1155.9 L1505.0 1156.5 L1508.0 1157.1 L1511.0 1157.6 L1514.0 1158.1 L1517.0 1158.5 L1520.0 1158.8 L1523.0 1159.1 L1526.0 1159.3 L1529.0 1159.5 L1532.0 1159.6 L1535.0 1159.7 L1538.0 1159.8 L1541.0 1159.8 L1544.0 1159.7 L1547.0 1159.6 L1550.0 1159.5 L1553.0 1159.3 L1556.0 1159.1 L1559.0 1158.9 L1562.0 1158.6 L1565.0 1158.3 L1568.0 1158.0 L1571.0 1157.6 L1574.0 1157.3 L1577.0 1156.9 L1580.0 1156.4 L1583.0 1156.0 L1586.0 1155.5 L1589.0 1155.1 L1592.0 1154.6 L1595.0 1154.1 L1598.0 1153.6 L1601.0 1153.0 L1604.0 1152.5 L1607.0 1152.0 L1610.0 1151.4 L1613.0 1150.9 L1616.0 1150.3 L1619.0 1149.8 L1622.0 1149.3 L1625.0 1148.7 L1628.0 1148.2 L1631.0 1147.7 L1634.0 1147.2 L1637.0 1146.7 L1640.0 1146.2 L1643.0 1145.7 L1646.0 1145.2 L1649.0 1144.7 L1652.0 1144.3 L1655.0 1143.8 L1658.0 1143.3 L1661.0 1142.8 L1664.0 1142.4 L1667.0 1141.9 L1670.0 1141.4 L1673.0 1140.9 L1676.0 1140.4 L1679.0 1139.9 L1682.0 1139.4 L1685.0 1138.9 L1688.0 1138.4 L1691.0 1137.8 L1694.0 1137.3 L1697.0 1136.7 L1700.0 1136.1 L1703.0 1135.6 L1706.0 1134.9 L1709.0 1134.3 L1712.0 1133.7 L1715.0 1133.1 L1718.0 1132.5 L1721.0 1131.8 L1724.0 1131.2 L1727.0 1130.6 L1730.0 1130.0 L1733.0 1129.4 L1736.0 1128.8 L1739.0 1128.2 L1742.0 1127.7 L1745.0 1127.2 L1748.0 1126.7 L1751.0 1126.2 L1754.0 1125.8 L1757.0 1125.4 L1760.0 1125.0 L1763.0 1124.7 L1766.0 1124.5 L1769.0 1124.2 L1772.0 1124.0 L1775.0 1123.9 L1778.0 1123.9 L1781.0 1123.8 L1784.0 1123.9 L1787.0 1124.0 L1790.0 1124.2 L1793.0 1124.4 L1796.0 1124.7 L1799.0 1125.1 L1802.0 1125.5 L1805.0 1126.0 L1808.0 1126.6 L1811.0 1127.3 L1814.0 1128.0 L1817.0 1128.9 L1820.0 1129.8 L1823.0 1130.8 L1826.0 1131.8 L1829.0 1133.0 L1832.0 1134.3 L1835.0 1135.6 L1838.0 1137.0 L1841.0 1138.6 L1844.0 1140.2 L1847.0 1141.9 L1850.0 1143.7 L1853.0 1145.6 L1856.0 1147.5 L1859.0 1149.5 L1862.0 1151.5 L1865.0 1153.6 L1868.0 1155.7 L1871.0 1157.8 L1874.0 1160.0 L1877.0 1162.1 L1880.0 1164.3 L1883.0 1166.4 L1886.0 1168.6 L1889.0 1170.7 L1892.0 1172.7 L1895.0 1174.7 L1898.0 1176.7 L1901.0 1178.6 L1904.0 1180.5 L1907.0 1182.3 L1910.0 1184.0 L1913.0 1185.7 L1916.0 1187.3 L1919.0 1188.8 L1922.0 1190.3 L1925.0 1191.7 L1928.0 1193.0 L1931.0 1194.3 L1934.0 1195.5 L1937.0 1196.7 L1940.0 1197.8 L1943.0 1198.9 L1946.0 1199.9 L1949.0 1200.8 L1952.0 1201.7 L1955.0 1202.6 L1958.0 1203.4 L1961.0 1204.1 L1964.0 1204.8 L1967.0 1205.5 L1970.0 1206.1 L1973.0 1206.7 L1976.0 1207.2 L1979.0 1207.7 L1982.0 1208.2 L1985.0 1208.6 L1988.0 1209.0 L1991.0 1209.3 L1994.0 1209.6 L1997.0 1209.9 L2000.0 1210.2 L2003.0 1210.4 L2006.0 1210.6 L2009.0 1210.7 L2012.0 1210.8 L2015.0 1210.9 L2018.0 1211.0 L2021.0 1211.1 L2024.0 1211.1 L2027.0 1211.1 L2030.0 1211.0 L2033.0 1211.0 L2036.0 1210.9 L2039.0 1210.7 L2042.0 1210.5 L2045.0 1210.3 L2048.0 1210.0 L2051.0 1209.6 L2054.0 1209.2 L2057.0 1208.7 L2060.0 1208.2 L2063.0 1207.5 L2066.0 1206.8 L2069.0 1206.0 L2072.0 1205.2 L2075.0 1204.2 L2078.0 1203.1 L2081.0 1202.0 L2084.0 1200.7 L2087.0 1199.4 L2090.0 1197.9 L2093.0 1196.4 L2096.0 1194.7 L2099.0 1192.9 L2102.0 1190.9 L2105.0 1188.9 L2108.0 1186.7 L2111.0 1184.4 L2114.0 1181.9 L2117.0 1179.3 L2120.0 1176.5 L2123.0 1173.6 L2126.0 1170.6 L2129.0 1167.4 L2132.0 1164.1 L2135.0 1160.7 L2138.0 1157.2 L2141.0 1153.6 L2144.0 1149.9 L2147.0 1146.2 L2150.0 1142.5 L2153.0 1138.7 L2156.0 1134.9 L2159.0 1131.1 L2162.0 1127.3 L2165.0 1123.6 L2168.0 1119.9 L2171.0 1116.3 L2174.0 1112.7 L2177.0 1109.2 L2180.0 1105.8 L2183.0 1102.5 L2186.0 1099.4 L2189.0 1096.3 L2192.0 1093.3 L2195.0 1090.5 L2198.0 1087.8 L2201.0 1085.1 L2204.0 1082.6 L2207.0 1080.2 L2210.0 1077.9 L2213.0 1075.7 L2216.0 1073.6 L2219.0 1071.6 L2222.0 1069.8 L2225.0 1068.1 L2228.0 1066.4 L2231.0 1064.9 L2234.0 1063.5 L2237.0 1062.2 L2240.0 1061.1 L2243.0 1060.0 L2246.0 1059.1 L2249.0 1058.3 L2252.0 1057.6 L2255.0 1057.0 L2258.0 1056.6 L2261.0 1056.3 L2264.0 1056.0 L2267.0 1056.0 L2270.0 1056.0 L2273.0 1056.2 L2276.0 1056.5 L2279.0 1057.0 L2282.0 1057.7 L2285.0 1058.5 L2288.0 1059.5 L2291.0 1060.7 L2294.0 1062.0 L2297.0 1063.6 L2300.0 1065.4 L2303.0 1067.5 L2306.0 1069.7 L2309.0 1072.2 L2312.0 1074.9 L2315.0 1077.9 L2318.0 1081.2 L2321.0 1084.7 L2324.0 1088.5 L2327.0 1092.6 L2330.0 1097.0 L2333.0 1101.6 L2336.0 1106.5 L2339.0 1111.5 L2342.0 1116.8 L2345.0 1122.2 L2348.0 1127.8 L2351.0 1133.5 L2354.0 1139.3 L2357.0 1145.2 L2360.0 1151.2 L2363.0 1157.2 L2366.0 1163.3 L2369.0 1169.3 L2372.0 1175.3 L2375.0 1181.3 L2378.0 1187.3 L2381.0 1193.1 L2384.0 1198.9 L2387.0 1204.5 L2390.0 1210.0 L2393.0 1215.3 L2396.0 1220.4 L2399.0 1225.4 L2402.0 1230.1 L2405.0 1234.6 L2408.0 1238.8 L2411.0 1242.8 L2414.0 1246.5 L2417.0 1250.0 L2420.0 1253.3 L2423.0 1256.4 L2426.0 1259.3 L2429.0 1262.0 L2432.0 1264.5 L2435.0 1266.8 L2438.0 1268.9 L2441.0 1270.9 L2444.0 1272.7 L2447.0 1274.3 L2450.0 1275.8 L2453.0 1277.1 L2456.0 1278.3 L2459.0 1279.4 L2462.0 1280.3 L2465.0 1281.1 L2468.0 1281.8 L2471.0 1282.0 L2474.0 1282.0 L2477.0 1282.0 L2480.0 1282.0 L2483.0 1282.0 L2486.0 1282.0 L2489.0 1282.0 L2492.0 1282.0 L2495.0 1282.0 L2498.0 1282.0 L2501.0 1282.0 L2504.0 1282.0 L2507.0 1282.0 L2510.0 1282.0 L2513.0 1282.0 L2516.0 1282.0 L2519.0 1282.0 L2522.0 1282.0 L2525.0 1282.0 L2528.0 1282.0 L2531.0 1282.0 L2534.0 1282.0 L2537.0 1281.9 L2540.0 1281.8 L2543.0 1281.8 L2546.0 1281.7 L2549.0 1281.7 L2552.0 1281.6 L2555.0 1281.6 L2558.0 1281.5 L2561.0 1281.5 L2564.0 1281.4 L2567.0 1281.2 L2570.0 1281.1 L2573.0 1280.9 L2576.0 1280.7 L2579.0 1280.4 L2582.0 1280.1 L2585.0 1279.8 L2588.0 1279.4 L2591.0 1279.0 L2594.0 1278.6 L2597.0 1278.1 L2600.0 1277.6 L2603.0 1277.0 L2606.0 1276.4 L2609.0 1275.8 L2612.0 1275.1 L2615.0 1274.4 L2618.0 1273.7 L2621.0 1272.9 L2624.0 1272.1 L2627.0 1271.2 L2630.0 1270.3 L2630 1282 L575 1282 Z" fill="url(#gu)"/>
    <path d="M575.0 1141.2 L578.0 1141.0 L581.0 1140.9 L584.0 1141.0 L587.0 1141.2 L590.0 1141.5 L593.0 1142.0 L596.0 1142.7 L599.0 1143.5 L602.0 1144.5 L605.0 1145.7 L608.0 1147.0 L611.0 1148.6 L614.0 1150.3 L617.0 1152.1 L620.0 1154.2 L623.0 1156.4 L626.0 1158.7 L629.0 1161.1 L632.0 1163.7 L635.0 1166.4 L638.0 1169.2 L641.0 1172.1 L644.0 1175.1 L647.0 1178.1 L650.0 1181.2 L653.0 1184.4 L656.0 1187.6 L659.0 1190.9 L662.0 1194.2 L665.0 1197.4 L668.0 1200.7 L671.0 1204.0 L674.0 1207.3 L677.0 1210.6 L680.0 1213.8 L683.0 1217.0 L686.0 1220.2 L689.0 1223.2 L692.0 1226.2 L695.0 1229.2 L698.0 1232.0 L701.0 1234.8 L704.0 1237.4 L707.0 1240.0 L710.0 1242.5 L713.0 1244.9 L716.0 1247.2 L719.0 1249.4 L722.0 1251.6 L725.0 1253.6 L728.0 1255.6 L731.0 1257.5 L734.0 1259.3 L737.0 1261.1 L740.0 1262.7 L743.0 1264.3 L746.0 1265.8 L749.0 1267.3 L752.0 1268.7 L755.0 1270.0 L758.0 1271.2 L761.0 1272.4 L764.0 1273.5 L767.0 1274.5 L770.0 1275.5 L773.0 1276.4 L776.0 1277.2 L779.0 1278.0 L782.0 1278.7 L785.0 1279.4 L788.0 1280.0 L791.0 1280.5 L794.0 1281.0 L797.0 1281.5 L800.0 1281.8 L803.0 1282.0 L806.0 1282.0 L809.0 1282.0 L812.0 1282.0 L815.0 1282.0 L818.0 1282.0 L821.0 1282.0 L824.0 1282.0 L827.0 1282.0 L830.0 1282.0 L833.0 1282.0 L836.0 1282.0 L839.0 1282.0 L842.0 1282.0 L845.0 1281.9 L848.0 1281.6 L851.0 1281.2 L854.0 1280.8 L857.0 1280.4 L860.0 1279.9 L863.0 1279.4 L866.0 1278.9 L869.0 1278.4 L872.0 1277.8 L875.0 1277.2 L878.0 1276.6 L881.0 1276.0 L884.0 1275.3 L887.0 1274.6 L890.0 1273.8 L893.0 1273.0 L896.0 1272.2 L899.0 1271.4 L902.0 1270.5 L905.0 1269.5 L908.0 1268.6 L911.0 1267.6 L914.0 1266.5 L917.0 1265.4 L920.0 1264.3 L923.0 1263.1 L926.0 1261.9 L929.0 1260.6 L932.0 1259.3 L935.0 1257.9 L938.0 1256.5 L941.0 1255.1 L944.0 1253.6 L947.0 1252.0 L950.0 1250.5 L953.0 1248.9 L956.0 1247.3 L959.0 1245.7 L962.0 1244.0 L965.0 1242.4 L968.0 1240.8 L971.0 1239.2 L974.0 1237.6 L977.0 1236.0 L980.0 1234.5 L983.0 1232.9 L986.0 1231.5 L989.0 1230.0 L992.0 1228.6 L995.0 1227.3 L998.0 1226.0 L1001.0 1224.8 L1004.0 1223.7 L1007.0 1222.6 L1010.0 1221.6 L1013.0 1220.7 L1016.0 1219.9 L1019.0 1219.0 L1022.0 1218.3 L1025.0 1217.6 L1028.0 1216.9 L1031.0 1216.2 L1034.0 1215.6 L1037.0 1215.0 L1040.0 1214.4 L1043.0 1213.8 L1046.0 1213.2 L1049.0 1212.6 L1052.0 1212.0 L1055.0 1211.4 L1058.0 1210.7 L1061.0 1210.1 L1064.0 1209.4 L1067.0 1208.6 L1070.0 1207.8 L1073.0 1207.0 L1076.0 1206.1 L1079.0 1205.1 L1082.0 1204.1 L1085.0 1203.0 L1088.0 1201.8 L1091.0 1200.6 L1094.0 1199.2 L1097.0 1197.7 L1100.0 1196.2 L1103.0 1194.5 L1106.0 1192.7 L1109.0 1190.8 L1112.0 1188.8 L1115.0 1186.6 L1118.0 1184.3 L1121.0 1181.8 L1124.0 1179.2 L1127.0 1176.5 L1130.0 1173.6 L1133.0 1170.6 L1136.0 1167.4 L1139.0 1164.2 L1142.0 1160.8 L1145.0 1157.3 L1148.0 1153.8 L1151.0 1150.1 L1154.0 1146.4 L1157.0 1142.6 L1160.0 1138.8 L1163.0 1134.9 L1166.0 1130.9 L1169.0 1126.9 L1172.0 1122.9 L1175.0 1118.9 L1178.0 1114.9 L1181.0 1110.8 L1184.0 1106.8 L1187.0 1102.7 L1190.0 1098.7 L1193.0 1094.8 L1196.0 1090.8 L1199.0 1086.9 L1202.0 1083.1 L1205.0 1079.3 L1208.0 1075.6 L1211.0 1072.0 L1214.0 1068.4 L1217.0 1065.0 L1220.0 1061.6 L1223.0 1058.3 L1226.0 1055.2 L1229.0 1052.2 L1232.0 1049.3 L1235.0 1046.6 L1238.0 1044.0 L1241.0 1041.6 L1244.0 1039.3 L1247.0 1037.3 L1250.0 1035.4 L1253.0 1033.6 L1256.0 1032.1 L1259.0 1030.7 L1262.0 1029.4 L1265.0 1028.3 L1268.0 1027.4 L1271.0 1026.5 L1274.0 1025.8 L1277.0 1025.3 L1280.0 1024.8 L1283.0 1024.5 L1286.0 1024.2 L1289.0 1024.1 L1292.0 1024.0 L1295.0 1024.0 L1298.0 1024.1 L1301.0 1024.3 L1304.0 1024.5 L1307.0 1024.9 L1310.0 1025.3 L1313.0 1025.8 L1316.0 1026.4 L1319.0 1027.2 L1322.0 1028.0 L1325.0 1029.0 L1328.0 1030.1 L1331.0 1031.3 L1334.0 1032.6 L1337.0 1034.1 L1340.0 1035.8 L1343.0 1037.6 L1346.0 1039.5 L1349.0 1041.6 L1352.0 1043.8 L1355.0 1046.1 L1358.0 1048.5 L1361.0 1051.0 L1364.0 1053.5 L1367.0 1056.2 L1370.0 1058.9 L1373.0 1061.7 L1376.0 1064.4 L1379.0 1067.3 L1382.0 1070.1 L1385.0 1073.0 L1388.0 1075.9 L1391.0 1078.9 L1394.0 1081.8 L1397.0 1084.7 L1400.0 1087.7 L1403.0 1090.6 L1406.0 1093.5 L1409.0 1096.4 L1412.0 1099.3 L1415.0 1102.1 L1418.0 1105.0 L1421.0 1107.7 L1424.0 1110.5 L1427.0 1113.2 L1430.0 1115.8 L1433.0 1118.4 L1436.0 1120.9 L1439.0 1123.3 L1442.0 1125.7 L1445.0 1127.9 L1448.0 1130.1 L1451.0 1132.2 L1454.0 1134.2 L1457.0 1136.1 L1460.0 1137.9 L1463.0 1139.7 L1466.0 1141.3 L1469.0 1142.8 L1472.0 1144.3 L1475.0 1145.7 L1478.0 1147.0 L1481.0 1148.2 L1484.0 1149.3 L1487.0 1150.4 L1490.0 1151.4 L1493.0 1152.3 L1496.0 1153.2 L1499.0 1153.9 L1502.0 1154.7 L1505.0 1155.3 L1508.0 1155.9 L1511.0 1156.4 L1514.0 1156.9 L1517.0 1157.3 L1520.0 1157.6 L1523.0 1157.9 L1526.0 1158.1 L1529.0 1158.3 L1532.0 1158.4 L1535.0 1158.5 L1538.0 1158.6 L1541.0 1158.6 L1544.0 1158.5 L1547.0 1158.4 L1550.0 1158.3 L1553.0 1158.1 L1556.0 1157.9 L1559.0 1157.7 L1562.0 1157.4 L1565.0 1157.1 L1568.0 1156.8 L1571.0 1156.4 L1574.0 1156.1 L1577.0 1155.7 L1580.0 1155.2 L1583.0 1154.8 L1586.0 1154.3 L1589.0 1153.9 L1592.0 1153.4 L1595.0 1152.9 L1598.0 1152.4 L1601.0 1151.8 L1604.0 1151.3 L1607.0 1150.8 L1610.0 1150.2 L1613.0 1149.7 L1616.0 1149.1 L1619.0 1148.6 L1622.0 1148.1 L1625.0 1147.5 L1628.0 1147.0 L1631.0 1146.5 L1634.0 1146.0 L1637.0 1145.5 L1640.0 1145.0 L1643.0 1144.5 L1646.0 1144.0 L1649.0 1143.5 L1652.0 1143.1 L1655.0 1142.6 L1658.0 1142.1 L1661.0 1141.6 L1664.0 1141.2 L1667.0 1140.7 L1670.0 1140.2 L1673.0 1139.7 L1676.0 1139.2 L1679.0 1138.7 L1682.0 1138.2 L1685.0 1137.7 L1688.0 1137.2 L1691.0 1136.6 L1694.0 1136.1 L1697.0 1135.5 L1700.0 1134.9 L1703.0 1134.4 L1706.0 1133.7 L1709.0 1133.1 L1712.0 1132.5 L1715.0 1131.9 L1718.0 1131.3 L1721.0 1130.6 L1724.0 1130.0 L1727.0 1129.4 L1730.0 1128.8 L1733.0 1128.2 L1736.0 1127.6 L1739.0 1127.0 L1742.0 1126.5 L1745.0 1126.0 L1748.0 1125.5 L1751.0 1125.0 L1754.0 1124.6 L1757.0 1124.2 L1760.0 1123.8 L1763.0 1123.5 L1766.0 1123.3 L1769.0 1123.0 L1772.0 1122.8 L1775.0 1122.7 L1778.0 1122.7 L1781.0 1122.6 L1784.0 1122.7 L1787.0 1122.8 L1790.0 1123.0 L1793.0 1123.2 L1796.0 1123.5 L1799.0 1123.9 L1802.0 1124.3 L1805.0 1124.8 L1808.0 1125.4 L1811.0 1126.1 L1814.0 1126.8 L1817.0 1127.7 L1820.0 1128.6 L1823.0 1129.6 L1826.0 1130.6 L1829.0 1131.8 L1832.0 1133.1 L1835.0 1134.4 L1838.0 1135.8 L1841.0 1137.4 L1844.0 1139.0 L1847.0 1140.7 L1850.0 1142.5 L1853.0 1144.4 L1856.0 1146.3 L1859.0 1148.3 L1862.0 1150.3 L1865.0 1152.4 L1868.0 1154.5 L1871.0 1156.6 L1874.0 1158.8 L1877.0 1160.9 L1880.0 1163.1 L1883.0 1165.2 L1886.0 1167.4 L1889.0 1169.5 L1892.0 1171.5 L1895.0 1173.5 L1898.0 1175.5 L1901.0 1177.4 L1904.0 1179.3 L1907.0 1181.1 L1910.0 1182.8 L1913.0 1184.5 L1916.0 1186.1 L1919.0 1187.6 L1922.0 1189.1 L1925.0 1190.5 L1928.0 1191.8 L1931.0 1193.1 L1934.0 1194.3 L1937.0 1195.5 L1940.0 1196.6 L1943.0 1197.7 L1946.0 1198.7 L1949.0 1199.6 L1952.0 1200.5 L1955.0 1201.4 L1958.0 1202.2 L1961.0 1202.9 L1964.0 1203.6 L1967.0 1204.3 L1970.0 1204.9 L1973.0 1205.5 L1976.0 1206.0 L1979.0 1206.5 L1982.0 1207.0 L1985.0 1207.4 L1988.0 1207.8 L1991.0 1208.1 L1994.0 1208.4 L1997.0 1208.7 L2000.0 1209.0 L2003.0 1209.2 L2006.0 1209.4 L2009.0 1209.5 L2012.0 1209.6 L2015.0 1209.7 L2018.0 1209.8 L2021.0 1209.9 L2024.0 1209.9 L2027.0 1209.9 L2030.0 1209.8 L2033.0 1209.8 L2036.0 1209.7 L2039.0 1209.5 L2042.0 1209.3 L2045.0 1209.1 L2048.0 1208.8 L2051.0 1208.4 L2054.0 1208.0 L2057.0 1207.5 L2060.0 1207.0 L2063.0 1206.3 L2066.0 1205.6 L2069.0 1204.8 L2072.0 1204.0 L2075.0 1203.0 L2078.0 1201.9 L2081.0 1200.8 L2084.0 1199.5 L2087.0 1198.2 L2090.0 1196.7 L2093.0 1195.2 L2096.0 1193.5 L2099.0 1191.7 L2102.0 1189.7 L2105.0 1187.7 L2108.0 1185.5 L2111.0 1183.2 L2114.0 1180.7 L2117.0 1178.1 L2120.0 1175.3 L2123.0 1172.4 L2126.0 1169.4 L2129.0 1166.2 L2132.0 1162.9 L2135.0 1159.5 L2138.0 1156.0 L2141.0 1152.4 L2144.0 1148.7 L2147.0 1145.0 L2150.0 1141.3 L2153.0 1137.5 L2156.0 1133.7 L2159.0 1129.9 L2162.0 1126.1 L2165.0 1122.4 L2168.0 1118.7 L2171.0 1115.1 L2174.0 1111.5 L2177.0 1108.0 L2180.0 1104.6 L2183.0 1101.3 L2186.0 1098.2 L2189.0 1095.1 L2192.0 1092.1 L2195.0 1089.3 L2198.0 1086.6 L2201.0 1083.9 L2204.0 1081.4 L2207.0 1079.0 L2210.0 1076.7 L2213.0 1074.5 L2216.0 1072.4 L2219.0 1070.4 L2222.0 1068.6 L2225.0 1066.9 L2228.0 1065.2 L2231.0 1063.7 L2234.0 1062.3 L2237.0 1061.0 L2240.0 1059.9 L2243.0 1058.8 L2246.0 1057.9 L2249.0 1057.1 L2252.0 1056.4 L2255.0 1055.8 L2258.0 1055.4 L2261.0 1055.1 L2264.0 1054.8 L2267.0 1054.8 L2270.0 1054.8 L2273.0 1055.0 L2276.0 1055.3 L2279.0 1055.8 L2282.0 1056.5 L2285.0 1057.3 L2288.0 1058.3 L2291.0 1059.5 L2294.0 1060.8 L2297.0 1062.4 L2300.0 1064.2 L2303.0 1066.3 L2306.0 1068.5 L2309.0 1071.0 L2312.0 1073.7 L2315.0 1076.7 L2318.0 1080.0 L2321.0 1083.5 L2324.0 1087.3 L2327.0 1091.4 L2330.0 1095.8 L2333.0 1100.4 L2336.0 1105.3 L2339.0 1110.3 L2342.0 1115.6 L2345.0 1121.0 L2348.0 1126.6 L2351.0 1132.3 L2354.0 1138.1 L2357.0 1144.0 L2360.0 1150.0 L2363.0 1156.0 L2366.0 1162.1 L2369.0 1168.1 L2372.0 1174.1 L2375.0 1180.1 L2378.0 1186.1 L2381.0 1191.9 L2384.0 1197.7 L2387.0 1203.3 L2390.0 1208.8 L2393.0 1214.1 L2396.0 1219.2 L2399.0 1224.2 L2402.0 1228.9 L2405.0 1233.4 L2408.0 1237.6 L2411.0 1241.6 L2414.0 1245.3 L2417.0 1248.8 L2420.0 1252.1 L2423.0 1255.2 L2426.0 1258.1 L2429.0 1260.8 L2432.0 1263.3 L2435.0 1265.6 L2438.0 1267.7 L2441.0 1269.7 L2444.0 1271.5 L2447.0 1273.1 L2450.0 1274.6 L2453.0 1275.9 L2456.0 1277.1 L2459.0 1278.2 L2462.0 1279.1 L2465.0 1279.9 L2468.0 1280.6 L2471.0 1281.2 L2474.0 1281.7 L2477.0 1282.0 L2480.0 1282.0 L2483.0 1282.0 L2486.0 1282.0 L2489.0 1282.0 L2492.0 1282.0 L2495.0 1282.0 L2498.0 1282.0 L2501.0 1282.0 L2504.0 1282.0 L2507.0 1282.0 L2510.0 1282.0 L2513.0 1282.0 L2516.0 1281.8 L2519.0 1281.6 L2522.0 1281.4 L2525.0 1281.2 L2528.0 1281.0 L2531.0 1280.9 L2534.0 1280.8 L2537.0 1280.7 L2540.0 1280.6 L2543.0 1280.6 L2546.0 1280.5 L2549.0 1280.5 L2552.0 1280.4 L2555.0 1280.4 L2558.0 1280.3 L2561.0 1280.3 L2564.0 1280.2 L2567.0 1280.0 L2570.0 1279.9 L2573.0 1279.7 L2576.0 1279.5 L2579.0 1279.2 L2582.0 1278.9 L2585.0 1278.6 L2588.0 1278.2 L2591.0 1277.8 L2594.0 1277.4 L2597.0 1276.9 L2600.0 1276.4 L2603.0 1275.8 L2606.0 1275.2 L2609.0 1274.6 L2612.0 1273.9 L2615.0 1273.2 L2618.0 1272.5 L2621.0 1271.7 L2624.0 1270.9 L2627.0 1270.0 L2630.0 1269.1" fill="none" stroke="#9d8bdc"/>
    <path d="M575.0 1281.9 L578.0 1280.3 L581.0 1278.7 L584.0 1277.2 L587.0 1275.6 L590.0 1274.0 L593.0 1272.5 L596.0 1271.0 L599.0 1269.5 L602.0 1268.0 L605.0 1266.5 L608.0 1265.1 L611.0 1263.7 L614.0 1262.3 L617.0 1260.9 L620.0 1259.5 L623.0 1258.1 L626.0 1256.8 L629.0 1255.4 L632.0 1254.1 L635.0 1252.8 L638.0 1251.6 L641.0 1250.3 L644.0 1249.1 L647.0 1247.8 L650.0 1246.6 L653.0 1245.5 L656.0 1244.3 L659.0 1243.1 L662.0 1242.0 L665.0 1240.9 L668.0 1239.8 L671.0 1238.8 L674.0 1237.7 L677.0 1236.7 L680.0 1235.7 L683.0 1234.7 L686.0 1233.7 L689.0 1232.8 L692.0 1231.9 L695.0 1230.9 L698.0 1230.1 L701.0 1229.2 L704.0 1228.4 L707.0 1227.5 L710.0 1226.7 L713.0 1225.9 L716.0 1225.2 L719.0 1224.5 L722.0 1223.7 L725.0 1223.0 L728.0 1222.4 L731.0 1221.7 L734.0 1221.1 L737.0 1220.5 L740.0 1219.9 L743.0 1219.4 L746.0 1218.8 L749.0 1218.3 L752.0 1217.8 L755.0 1217.3 L758.0 1216.9 L761.0 1216.5 L764.0 1216.1 L767.0 1215.7 L770.0 1215.3 L773.0 1215.0 L776.0 1214.6 L779.0 1214.3 L782.0 1214.0 L785.0 1213.7 L788.0 1213.4 L791.0 1213.1 L794.0 1212.8 L797.0 1212.5 L800.0 1212.3 L803.0 1212.0 L806.0 1211.7 L809.0 1211.4 L812.0 1211.1 L815.0 1210.8 L818.0 1210.5 L821.0 1210.1 L824.0 1209.8 L827.0 1209.5 L830.0 1209.1 L833.0 1208.7 L836.0 1208.3 L839.0 1207.9 L842.0 1207.4 L845.0 1207.0 L848.0 1206.5 L851.0 1206.0 L854.0 1205.4 L857.0 1204.8 L860.0 1204.2 L863.0 1203.6 L866.0 1202.9 L869.0 1202.2 L872.0 1201.4 L875.0 1200.6 L878.0 1199.8 L881.0 1198.9 L884.0 1198.0 L887.0 1197.1 L890.0 1196.1 L893.0 1195.0 L896.0 1193.9 L899.0 1192.8 L902.0 1191.6 L905.0 1190.4 L908.0 1189.1 L911.0 1187.8 L914.0 1186.4 L917.0 1184.9 L920.0 1183.4 L923.0 1181.9 L926.0 1180.3 L929.0 1178.7 L932.0 1177.1 L935.0 1175.4 L938.0 1173.7 L941.0 1172.0 L944.0 1170.3 L947.0 1168.7 L950.0 1167.0 L953.0 1165.3 L956.0 1163.6 L959.0 1161.9 L962.0 1160.3 L965.0 1158.7 L968.0 1157.1 L971.0 1155.6 L974.0 1154.1 L977.0 1152.7 L980.0 1151.3 L983.0 1150.0 L986.0 1148.7 L989.0 1147.5 L992.0 1146.4 L995.0 1145.3 L998.0 1144.3 L1001.0 1143.4 L1004.0 1142.5 L1007.0 1141.6 L1010.0 1140.9 L1013.0 1140.1 L1016.0 1139.5 L1019.0 1138.9 L1022.0 1138.3 L1025.0 1137.8 L1028.0 1137.4 L1031.0 1137.0 L1034.0 1136.7 L1037.0 1136.4 L1040.0 1136.2 L1043.0 1136.0 L1046.0 1135.9 L1049.0 1135.8 L1052.0 1135.8 L1055.0 1135.8 L1058.0 1135.9 L1061.0 1136.0 L1064.0 1136.2 L1067.0 1136.4 L1070.0 1136.7 L1073.0 1137.0 L1076.0 1137.4 L1079.0 1137.8 L1082.0 1138.3 L1085.0 1138.8 L1088.0 1139.3 L1091.0 1139.9 L1094.0 1140.5 L1097.0 1141.2 L1100.0 1141.9 L1103.0 1142.7 L1106.0 1143.5 L1109.0 1144.4 L1112.0 1145.3 L1115.0 1146.3 L1118.0 1147.4 L1121.0 1148.6 L1124.0 1149.9 L1127.0 1151.4 L1130.0 1152.9 L1133.0 1154.6 L1136.0 1156.5 L1139.0 1158.5 L1142.0 1160.6 L1145.0 1163.0 L1148.0 1165.5 L1151.0 1168.2 L1154.0 1171.0 L1157.0 1173.9 L1160.0 1177.0 L1163.0 1180.1 L1166.0 1183.3 L1169.0 1186.6 L1172.0 1189.9 L1175.0 1193.2 L1178.0 1196.5 L1181.0 1199.8 L1184.0 1203.0 L1187.0 1206.2 L1190.0 1209.4 L1193.0 1212.4 L1196.0 1215.3 L1199.0 1218.1 L1202.0 1220.9 L1205.0 1223.5 L1208.0 1226.0 L1211.0 1228.4 L1214.0 1230.6 L1217.0 1232.8 L1220.0 1234.9 L1223.0 1236.9 L1226.0 1238.8 L1229.0 1240.6 L1232.0 1242.3 L1235.0 1244.0 L1238.0 1245.5 L1241.0 1246.9 L1244.0 1248.3 L1247.0 1249.6 L1250.0 1250.8 L1253.0 1251.9 L1256.0 1253.0 L1259.0 1254.0 L1262.0 1254.9 L1265.0 1255.7 L1268.0 1256.5 L1271.0 1257.2 L1274.0 1257.8 L1277.0 1258.4 L1280.0 1258.9 L1283.0 1259.4 L1286.0 1259.8 L1289.0 1260.1 L1292.0 1260.4 L1295.0 1260.7 L1298.0 1260.9 L1301.0 1261.0 L1304.0 1261.1 L1307.0 1261.2 L1310.0 1261.2 L1313.0 1261.1 L1316.0 1261.0 L1319.0 1260.9 L1322.0 1260.6 L1325.0 1260.3 L1328.0 1260.0 L1331.0 1259.5 L1334.0 1259.0 L1337.0 1258.5 L1340.0 1257.8 L1343.0 1257.0 L1346.0 1256.2 L1349.0 1255.3 L1352.0 1254.3 L1355.0 1253.2 L1358.0 1252.0 L1361.0 1250.7 L1364.0 1249.3 L1367.0 1247.7 L1370.0 1246.1 L1373.0 1244.4 L1376.0 1242.5 L1379.0 1240.6 L1382.0 1238.5 L1385.0 1236.3 L1388.0 1233.9 L1391.0 1231.3 L1394.0 1228.5 L1397.0 1225.5 L1400.0 1222.1 L1403.0 1218.5 L1406.0 1214.5 L1409.0 1210.1 L1412.0 1205.3 L1415.0 1200.0 L1418.0 1194.3 L1421.0 1188.0 L1424.0 1181.3 L1427.0 1174.2 L1430.0 1166.8 L1433.0 1159.2 L1436.0 1151.6 L1439.0 1144.0 L1442.0 1136.6 L1445.0 1129.4 L1448.0 1122.7 L1451.0 1116.4 L1454.0 1110.7 L1457.0 1105.5 L1460.0 1100.8 L1463.0 1096.6 L1466.0 1092.7 L1469.0 1089.3 L1472.0 1086.2 L1475.0 1083.3 L1478.0 1080.8 L1481.0 1078.4 L1484.0 1076.3 L1487.0 1074.4 L1490.0 1072.6 L1493.0 1071.1 L1496.0 1069.6 L1499.0 1068.4 L1502.0 1067.3 L1505.0 1066.3 L1508.0 1065.4 L1511.0 1064.7 L1514.0 1064.1 L1517.0 1063.5 L1520.0 1063.1 L1523.0 1062.7 L1526.0 1062.4 L1529.0 1062.1 L1532.0 1061.9 L1535.0 1061.7 L1538.0 1061.5 L1541.0 1061.4 L1544.0 1061.3 L1547.0 1061.3 L1550.0 1061.3 L1553.0 1061.5 L1556.0 1061.7 L1559.0 1062.1 L1562.0 1062.6 L1565.0 1063.2 L1568.0 1064.1 L1571.0 1065.1 L1574.0 1066.3 L1577.0 1067.8 L1580.0 1069.4 L1583.0 1071.4 L1586.0 1073.6 L1589.0 1076.1 L1592.0 1078.9 L1595.0 1082.0 L1598.0 1085.4 L1601.0 1089.1 L1604.0 1093.1 L1607.0 1097.2 L1610.0 1101.4 L1613.0 1105.8 L1616.0 1110.1 L1619.0 1114.5 L1622.0 1118.8 L1625.0 1123.2 L1628.0 1127.5 L1631.0 1131.7 L1634.0 1135.8 L1637.0 1139.9 L1640.0 1143.9 L1643.0 1147.8 L1646.0 1151.5 L1649.0 1155.1 L1652.0 1158.6 L1655.0 1161.9 L1658.0 1165.0 L1661.0 1168.0 L1664.0 1170.8 L1667.0 1173.5 L1670.0 1176.0 L1673.0 1178.4 L1676.0 1180.6 L1679.0 1182.7 L1682.0 1184.7 L1685.0 1186.6 L1688.0 1188.4 L1691.0 1190.1 L1694.0 1191.7 L1697.0 1193.2 L1700.0 1194.7 L1703.0 1196.0 L1706.0 1197.3 L1709.0 1198.6 L1712.0 1199.7 L1715.0 1200.9 L1718.0 1202.0 L1721.0 1203.0 L1724.0 1204.0 L1727.0 1205.0 L1730.0 1205.9 L1733.0 1206.8 L1736.0 1207.6 L1739.0 1208.4 L1742.0 1209.1 L1745.0 1209.7 L1748.0 1210.4 L1751.0 1210.9 L1754.0 1211.4 L1757.0 1211.9 L1760.0 1212.2 L1763.0 1212.6 L1766.0 1212.8 L1769.0 1213.0 L1772.0 1213.1 L1775.0 1213.2 L1778.0 1213.2 L1781.0 1213.1 L1784.0 1212.9 L1787.0 1212.7 L1790.0 1212.4 L1793.0 1212.0 L1796.0 1211.6 L1799.0 1211.1 L1802.0 1210.6 L1805.0 1210.0 L1808.0 1209.3 L1811.0 1208.6 L1814.0 1207.8 L1817.0 1207.0 L1820.0 1206.1 L1823.0 1205.2 L1826.0 1204.2 L1829.0 1203.2 L1832.0 1202.1 L1835.0 1201.0 L1838.0 1199.9 L1841.0 1198.7 L1844.0 1197.6 L1847.0 1196.3 L1850.0 1195.1 L1853.0 1193.8 L1856.0 1192.5 L1859.0 1191.1 L1862.0 1189.8 L1865.0 1188.4 L1868.0 1187.0 L1871.0 1185.6 L1874.0 1184.2 L1877.0 1182.8 L1880.0 1181.3 L1883.0 1179.9 L1886.0 1178.4 L1889.0 1177.0 L1892.0 1175.5 L1895.0 1174.0 L1898.0 1172.6 L1901.0 1171.1 L1904.0 1169.7 L1907.0 1168.3 L1910.0 1166.8 L1913.0 1165.4 L1916.0 1164.0 L1919.0 1162.6 L1922.0 1161.3 L1925.0 1159.9 L1928.0 1158.6 L1931.0 1157.3 L1934.0 1156.1 L1937.0 1154.8 L1940.0 1153.6 L1943.0 1152.4 L1946.0 1151.3 L1949.0 1150.2 L1952.0 1149.1 L1955.0 1148.0 L1958.0 1147.0 L1961.0 1146.1 L1964.0 1145.1 L1967.0 1144.2 L1970.0 1143.4 L1973.0 1142.6 L1976.0 1141.8 L1979.0 1141.1 L1982.0 1140.4 L1985.0 1139.8 L1988.0 1139.2 L1991.0 1138.7 L1994.0 1138.3 L1997.0 1137.8 L2000.0 1137.5 L2003.0 1137.2 L2006.0 1136.9 L2009.0 1136.7 L2012.0 1136.6 L2015.0 1136.5 L2018.0 1136.5 L2021.0 1136.6 L2024.0 1136.7 L2027.0 1136.9 L2030.0 1137.1 L2033.0 1137.4 L2036.0 1137.8 L2039.0 1138.2 L2042.0 1138.7 L2045.0 1139.3 L2048.0 1139.9 L2051.0 1140.6 L2054.0 1141.4 L2057.0 1142.2 L2060.0 1143.0 L2063.0 1144.0 L2066.0 1145.0 L2069.0 1146.0 L2072.0 1147.1 L2075.0 1148.3 L2078.0 1149.5 L2081.0 1150.8 L2084.0 1152.2 L2087.0 1153.6 L2090.0 1155.0 L2093.0 1156.6 L2096.0 1158.2 L2099.0 1159.9 L2102.0 1161.7 L2105.0 1163.5 L2108.0 1165.4 L2111.0 1167.4 L2114.0 1169.5 L2117.0 1171.7 L2120.0 1174.0 L2123.0 1176.3 L2126.0 1178.8 L2129.0 1181.3 L2132.0 1183.9 L2135.0 1186.6 L2138.0 1189.3 L2141.0 1192.1 L2144.0 1195.0 L2147.0 1197.8 L2150.0 1200.7 L2153.0 1203.7 L2156.0 1206.6 L2159.0 1209.5 L2162.0 1212.5 L2165.0 1215.4 L2168.0 1218.3 L2171.0 1221.2 L2174.0 1224.0 L2177.0 1226.8 L2180.0 1229.6 L2183.0 1232.3 L2186.0 1234.9 L2189.0 1237.4 L2192.0 1239.9 L2195.0 1242.3 L2198.0 1244.5 L2201.0 1246.7 L2204.0 1248.7 L2207.0 1250.7 L2210.0 1252.5 L2213.0 1254.2 L2216.0 1255.8 L2219.0 1257.3 L2222.0 1258.7 L2225.0 1260.0 L2228.0 1261.3 L2231.0 1262.4 L2234.0 1263.4 L2237.0 1264.3 L2240.0 1265.2 L2243.0 1265.9 L2246.0 1266.6 L2249.0 1267.2 L2252.0 1267.7 L2255.0 1268.1 L2258.0 1268.5 L2261.0 1268.8 L2264.0 1269.0 L2267.0 1269.1 L2270.0 1269.2 L2273.0 1269.2 L2276.0 1269.1 L2279.0 1269.0 L2282.0 1268.8 L2285.0 1268.5 L2288.0 1268.2 L2291.0 1267.9 L2294.0 1267.4 L2297.0 1267.0 L2300.0 1266.5 L2303.0 1265.9 L2306.0 1265.3 L2309.0 1264.6 L2312.0 1264.0 L2315.0 1263.2 L2318.0 1262.5 L2321.0 1261.7 L2324.0 1260.8 L2327.0 1260.0 L2330.0 1259.1 L2333.0 1258.2 L2336.0 1257.2 L2339.0 1256.3 L2342.0 1255.3 L2345.0 1254.3 L2348.0 1253.3 L2351.0 1252.2 L2354.0 1251.2 L2357.0 1250.1 L2360.0 1249.1 L2363.0 1248.0 L2366.0 1246.9 L2369.0 1245.8 L2372.0 1244.8 L2375.0 1243.7 L2378.0 1242.6 L2381.0 1241.6 L2384.0 1240.5 L2387.0 1239.5 L2390.0 1238.4 L2393.0 1237.4 L2396.0 1236.4 L2399.0 1235.4 L2402.0 1234.4 L2405.0 1233.5 L2408.0 1232.6 L2411.0 1231.7 L2414.0 1230.8 L2417.0 1229.9 L2420.0 1229.1 L2423.0 1228.3 L2426.0 1227.5 L2429.0 1226.8 L2432.0 1226.0 L2435.0 1225.3 L2438.0 1224.6 L2441.0 1224.0 L2444.0 1223.3 L2447.0 1222.7 L2450.0 1222.2 L2453.0 1221.6 L2456.0 1221.1 L2459.0 1220.6 L2462.0 1220.1 L2465.0 1219.7 L2468.0 1219.3 L2471.0 1218.9 L2474.0 1218.5 L2477.0 1218.2 L2480.0 1217.9 L2483.0 1217.6 L2486.0 1217.4 L2489.0 1217.2 L2492.0 1217.0 L2495.0 1216.8 L2498.0 1216.7 L2501.0 1216.6 L2504.0 1216.6 L2507.0 1216.6 L2510.0 1216.6 L2513.0 1216.6 L2516.0 1216.7 L2519.0 1216.8 L2522.0 1216.9 L2525.0 1217.1 L2528.0 1217.3 L2531.0 1217.5 L2534.0 1217.8 L2537.0 1218.1 L2540.0 1218.4 L2543.0 1218.8 L2546.0 1219.2 L2549.0 1219.7 L2552.0 1220.2 L2555.0 1220.7 L2558.0 1221.2 L2561.0 1221.8 L2564.0 1222.5 L2567.0 1223.1 L2570.0 1223.8 L2573.0 1224.6 L2576.0 1225.3 L2579.0 1226.1 L2582.0 1227.0 L2585.0 1227.9 L2588.0 1228.8 L2591.0 1229.8 L2594.0 1230.8 L2597.0 1231.9 L2600.0 1232.9 L2603.0 1234.1 L2606.0 1235.2 L2609.0 1236.5 L2612.0 1237.7 L2615.0 1239.0 L2618.0 1240.3 L2621.0 1241.7 L2624.0 1243.1 L2627.0 1244.6 L2630.0 1246.1 L2630 1282 L575 1282 Z" fill="url(#gp)"/>
    <path d="M575.0 1280.7 L578.0 1279.1 L581.0 1277.5 L584.0 1276.0 L587.0 1274.4 L590.0 1272.8 L593.0 1271.3 L596.0 1269.8 L599.0 1268.3 L602.0 1266.8 L605.0 1265.3 L608.0 1263.9 L611.0 1262.5 L614.0 1261.1 L617.0 1259.7 L620.0 1258.3 L623.0 1256.9 L626.0 1255.6 L629.0 1254.2 L632.0 1252.9 L635.0 1251.6 L638.0 1250.4 L641.0 1249.1 L644.0 1247.9 L647.0 1246.6 L650.0 1245.4 L653.0 1244.3 L656.0 1243.1 L659.0 1241.9 L662.0 1240.8 L665.0 1239.7 L668.0 1238.6 L671.0 1237.6 L674.0 1236.5 L677.0 1235.5 L680.0 1234.5 L683.0 1233.5 L686.0 1232.5 L689.0 1231.6 L692.0 1230.7 L695.0 1229.7 L698.0 1228.9 L701.0 1228.0 L704.0 1227.2 L707.0 1226.3 L710.0 1225.5 L713.0 1224.7 L716.0 1224.0 L719.0 1223.3 L722.0 1222.5 L725.0 1221.8 L728.0 1221.2 L731.0 1220.5 L734.0 1219.9 L737.0 1219.3 L740.0 1218.7 L743.0 1218.2 L746.0 1217.6 L749.0 1217.1 L752.0 1216.6 L755.0 1216.1 L758.0 1215.7 L761.0 1215.3 L764.0 1214.9 L767.0 1214.5 L770.0 1214.1 L773.0 1213.8 L776.0 1213.4 L779.0 1213.1 L782.0 1212.8 L785.0 1212.5 L788.0 1212.2 L791.0 1211.9 L794.0 1211.6 L797.0 1211.3 L800.0 1211.1 L803.0 1210.8 L806.0 1210.5 L809.0 1210.2 L812.0 1209.9 L815.0 1209.6 L818.0 1209.3 L821.0 1208.9 L824.0 1208.6 L827.0 1208.3 L830.0 1207.9 L833.0 1207.5 L836.0 1207.1 L839.0 1206.7 L842.0 1206.2 L845.0 1205.8 L848.0 1205.3 L851.0 1204.8 L854.0 1204.2 L857.0 1203.6 L860.0 1203.0 L863.0 1202.4 L866.0 1201.7 L869.0 1201.0 L872.0 1200.2 L875.0 1199.4 L878.0 1198.6 L881.0 1197.7 L884.0 1196.8 L887.0 1195.9 L890.0 1194.9 L893.0 1193.8 L896.0 1192.7 L899.0 1191.6 L902.0 1190.4 L905.0 1189.2 L908.0 1187.9 L911.0 1186.6 L914.0 1185.2 L917.0 1183.7 L920.0 1182.2 L923.0 1180.7 L926.0 1179.1 L929.0 1177.5 L932.0 1175.9 L935.0 1174.2 L938.0 1172.5 L941.0 1170.8 L944.0 1169.1 L947.0 1167.5 L950.0 1165.8 L953.0 1164.1 L956.0 1162.4 L959.0 1160.7 L962.0 1159.1 L965.0 1157.5 L968.0 1155.9 L971.0 1154.4 L974.0 1152.9 L977.0 1151.5 L980.0 1150.1 L983.0 1148.8 L986.0 1147.5 L989.0 1146.3 L992.0 1145.2 L995.0 1144.1 L998.0 1143.1 L1001.0 1142.2 L1004.0 1141.3 L1007.0 1140.4 L1010.0 1139.7 L1013.0 1138.9 L1016.0 1138.3 L1019.0 1137.7 L1022.0 1137.1 L1025.0 1136.6 L1028.0 1136.2 L1031.0 1135.8 L1034.0 1135.5 L1037.0 1135.2 L1040.0 1135.0 L1043.0 1134.8 L1046.0 1134.7 L1049.0 1134.6 L1052.0 1134.6 L1055.0 1134.6 L1058.0 1134.7 L1061.0 1134.8 L1064.0 1135.0 L1067.0 1135.2 L1070.0 1135.5 L1073.0 1135.8 L1076.0 1136.2 L1079.0 1136.6 L1082.0 1137.1 L1085.0 1137.6 L1088.0 1138.1 L1091.0 1138.7 L1094.0 1139.3 L1097.0 1140.0 L1100.0 1140.7 L1103.0 1141.5 L1106.0 1142.3 L1109.0 1143.2 L1112.0 1144.1 L1115.0 1145.1 L1118.0 1146.2 L1121.0 1147.4 L1124.0 1148.7 L1127.0 1150.2 L1130.0 1151.7 L1133.0 1153.4 L1136.0 1155.3 L1139.0 1157.3 L1142.0 1159.4 L1145.0 1161.8 L1148.0 1164.3 L1151.0 1167.0 L1154.0 1169.8 L1157.0 1172.7 L1160.0 1175.8 L1163.0 1178.9 L1166.0 1182.1 L1169.0 1185.4 L1172.0 1188.7 L1175.0 1192.0 L1178.0 1195.3 L1181.0 1198.6 L1184.0 1201.8 L1187.0 1205.0 L1190.0 1208.2 L1193.0 1211.2 L1196.0 1214.1 L1199.0 1216.9 L1202.0 1219.7 L1205.0 1222.3 L1208.0 1224.8 L1211.0 1227.2 L1214.0 1229.4 L1217.0 1231.6 L1220.0 1233.7 L1223.0 1235.7 L1226.0 1237.6 L1229.0 1239.4 L1232.0 1241.1 L1235.0 1242.8 L1238.0 1244.3 L1241.0 1245.7 L1244.0 1247.1 L1247.0 1248.4 L1250.0 1249.6 L1253.0 1250.7 L1256.0 1251.8 L1259.0 1252.8 L1262.0 1253.7 L1265.0 1254.5 L1268.0 1255.3 L1271.0 1256.0 L1274.0 1256.6 L1277.0 1257.2 L1280.0 1257.7 L1283.0 1258.2 L1286.0 1258.6 L1289.0 1258.9 L1292.0 1259.2 L1295.0 1259.5 L1298.0 1259.7 L1301.0 1259.8 L1304.0 1259.9 L1307.0 1260.0 L1310.0 1260.0 L1313.0 1259.9 L1316.0 1259.8 L1319.0 1259.7 L1322.0 1259.4 L1325.0 1259.1 L1328.0 1258.8 L1331.0 1258.3 L1334.0 1257.8 L1337.0 1257.3 L1340.0 1256.6 L1343.0 1255.8 L1346.0 1255.0 L1349.0 1254.1 L1352.0 1253.1 L1355.0 1252.0 L1358.0 1250.8 L1361.0 1249.5 L1364.0 1248.1 L1367.0 1246.5 L1370.0 1244.9 L1373.0 1243.2 L1376.0 1241.3 L1379.0 1239.4 L1382.0 1237.3 L1385.0 1235.1 L1388.0 1232.7 L1391.0 1230.1 L1394.0 1227.3 L1397.0 1224.3 L1400.0 1220.9 L1403.0 1217.3 L1406.0 1213.3 L1409.0 1208.9 L1412.0 1204.1 L1415.0 1198.8 L1418.0 1193.1 L1421.0 1186.8 L1424.0 1180.1 L1427.0 1173.0 L1430.0 1165.6 L1433.0 1158.0 L1436.0 1150.4 L1439.0 1142.8 L1442.0 1135.4 L1445.0 1128.2 L1448.0 1121.5 L1451.0 1115.2 L1454.0 1109.5 L1457.0 1104.3 L1460.0 1099.6 L1463.0 1095.4 L1466.0 1091.5 L1469.0 1088.1 L1472.0 1085.0 L1475.0 1082.1 L1478.0 1079.6 L1481.0 1077.2 L1484.0 1075.1 L1487.0 1073.2 L1490.0 1071.4 L1493.0 1069.9 L1496.0 1068.4 L1499.0 1067.2 L1502.0 1066.1 L1505.0 1065.1 L1508.0 1064.2 L1511.0 1063.5 L1514.0 1062.9 L1517.0 1062.3 L1520.0 1061.9 L1523.0 1061.5 L1526.0 1061.2 L1529.0 1060.9 L1532.0 1060.7 L1535.0 1060.5 L1538.0 1060.3 L1541.0 1060.2 L1544.0 1060.1 L1547.0 1060.1 L1550.0 1060.1 L1553.0 1060.3 L1556.0 1060.5 L1559.0 1060.9 L1562.0 1061.4 L1565.0 1062.0 L1568.0 1062.9 L1571.0 1063.9 L1574.0 1065.1 L1577.0 1066.6 L1580.0 1068.2 L1583.0 1070.2 L1586.0 1072.4 L1589.0 1074.9 L1592.0 1077.7 L1595.0 1080.8 L1598.0 1084.2 L1601.0 1087.9 L1604.0 1091.9 L1607.0 1096.0 L1610.0 1100.2 L1613.0 1104.6 L1616.0 1108.9 L1619.0 1113.3 L1622.0 1117.6 L1625.0 1122.0 L1628.0 1126.3 L1631.0 1130.5 L1634.0 1134.6 L1637.0 1138.7 L1640.0 1142.7 L1643.0 1146.6 L1646.0 1150.3 L1649.0 1153.9 L1652.0 1157.4 L1655.0 1160.7 L1658.0 1163.8 L1661.0 1166.8 L1664.0 1169.6 L1667.0 1172.3 L1670.0 1174.8 L1673.0 1177.2 L1676.0 1179.4 L1679.0 1181.5 L1682.0 1183.5 L1685.0 1185.4 L1688.0 1187.2 L1691.0 1188.9 L1694.0 1190.5 L1697.0 1192.0 L1700.0 1193.5 L1703.0 1194.8 L1706.0 1196.1 L1709.0 1197.4 L1712.0 1198.5 L1715.0 1199.7 L1718.0 1200.8 L1721.0 1201.8 L1724.0 1202.8 L1727.0 1203.8 L1730.0 1204.7 L1733.0 1205.6 L1736.0 1206.4 L1739.0 1207.2 L1742.0 1207.9 L1745.0 1208.5 L1748.0 1209.2 L1751.0 1209.7 L1754.0 1210.2 L1757.0 1210.7 L1760.0 1211.0 L1763.0 1211.4 L1766.0 1211.6 L1769.0 1211.8 L1772.0 1211.9 L1775.0 1212.0 L1778.0 1212.0 L1781.0 1211.9 L1784.0 1211.7 L1787.0 1211.5 L1790.0 1211.2 L1793.0 1210.8 L1796.0 1210.4 L1799.0 1209.9 L1802.0 1209.4 L1805.0 1208.8 L1808.0 1208.1 L1811.0 1207.4 L1814.0 1206.6 L1817.0 1205.8 L1820.0 1204.9 L1823.0 1204.0 L1826.0 1203.0 L1829.0 1202.0 L1832.0 1200.9 L1835.0 1199.8 L1838.0 1198.7 L1841.0 1197.5 L1844.0 1196.4 L1847.0 1195.1 L1850.0 1193.9 L1853.0 1192.6 L1856.0 1191.3 L1859.0 1189.9 L1862.0 1188.6 L1865.0 1187.2 L1868.0 1185.8 L1871.0 1184.4 L1874.0 1183.0 L1877.0 1181.6 L1880.0 1180.1 L1883.0 1178.7 L1886.0 1177.2 L1889.0 1175.8 L1892.0 1174.3 L1895.0 1172.8 L1898.0 1171.4 L1901.0 1169.9 L1904.0 1168.5 L1907.0 1167.1 L1910.0 1165.6 L1913.0 1164.2 L1916.0 1162.8 L1919.0 1161.4 L1922.0 1160.1 L1925.0 1158.7 L1928.0 1157.4 L1931.0 1156.1 L1934.0 1154.9 L1937.0 1153.6 L1940.0 1152.4 L1943.0 1151.2 L1946.0 1150.1 L1949.0 1149.0 L1952.0 1147.9 L1955.0 1146.8 L1958.0 1145.8 L1961.0 1144.9 L1964.0 1143.9 L1967.0 1143.0 L1970.0 1142.2 L1973.0 1141.4 L1976.0 1140.6 L1979.0 1139.9 L1982.0 1139.2 L1985.0 1138.6 L1988.0 1138.0 L1991.0 1137.5 L1994.0 1137.1 L1997.0 1136.6 L2000.0 1136.3 L2003.0 1136.0 L2006.0 1135.7 L2009.0 1135.5 L2012.0 1135.4 L2015.0 1135.3 L2018.0 1135.3 L2021.0 1135.4 L2024.0 1135.5 L2027.0 1135.7 L2030.0 1135.9 L2033.0 1136.2 L2036.0 1136.6 L2039.0 1137.0 L2042.0 1137.5 L2045.0 1138.1 L2048.0 1138.7 L2051.0 1139.4 L2054.0 1140.2 L2057.0 1141.0 L2060.0 1141.8 L2063.0 1142.8 L2066.0 1143.8 L2069.0 1144.8 L2072.0 1145.9 L2075.0 1147.1 L2078.0 1148.3 L2081.0 1149.6 L2084.0 1151.0 L2087.0 1152.4 L2090.0 1153.8 L2093.0 1155.4 L2096.0 1157.0 L2099.0 1158.7 L2102.0 1160.5 L2105.0 1162.3 L2108.0 1164.2 L2111.0 1166.2 L2114.0 1168.3 L2117.0 1170.5 L2120.0 1172.8 L2123.0 1175.1 L2126.0 1177.6 L2129.0 1180.1 L2132.0 1182.7 L2135.0 1185.4 L2138.0 1188.1 L2141.0 1190.9 L2144.0 1193.8 L2147.0 1196.6 L2150.0 1199.5 L2153.0 1202.5 L2156.0 1205.4 L2159.0 1208.3 L2162.0 1211.3 L2165.0 1214.2 L2168.0 1217.1 L2171.0 1220.0 L2174.0 1222.8 L2177.0 1225.6 L2180.0 1228.4 L2183.0 1231.1 L2186.0 1233.7 L2189.0 1236.2 L2192.0 1238.7 L2195.0 1241.1 L2198.0 1243.3 L2201.0 1245.5 L2204.0 1247.5 L2207.0 1249.5 L2210.0 1251.3 L2213.0 1253.0 L2216.0 1254.6 L2219.0 1256.1 L2222.0 1257.5 L2225.0 1258.8 L2228.0 1260.1 L2231.0 1261.2 L2234.0 1262.2 L2237.0 1263.1 L2240.0 1264.0 L2243.0 1264.7 L2246.0 1265.4 L2249.0 1266.0 L2252.0 1266.5 L2255.0 1266.9 L2258.0 1267.3 L2261.0 1267.6 L2264.0 1267.8 L2267.0 1267.9 L2270.0 1268.0 L2273.0 1268.0 L2276.0 1267.9 L2279.0 1267.8 L2282.0 1267.6 L2285.0 1267.3 L2288.0 1267.0 L2291.0 1266.7 L2294.0 1266.2 L2297.0 1265.8 L2300.0 1265.3 L2303.0 1264.7 L2306.0 1264.1 L2309.0 1263.4 L2312.0 1262.8 L2315.0 1262.0 L2318.0 1261.3 L2321.0 1260.5 L2324.0 1259.6 L2327.0 1258.8 L2330.0 1257.9 L2333.0 1257.0 L2336.0 1256.0 L2339.0 1255.1 L2342.0 1254.1 L2345.0 1253.1 L2348.0 1252.1 L2351.0 1251.0 L2354.0 1250.0 L2357.0 1248.9 L2360.0 1247.9 L2363.0 1246.8 L2366.0 1245.7 L2369.0 1244.6 L2372.0 1243.6 L2375.0 1242.5 L2378.0 1241.4 L2381.0 1240.4 L2384.0 1239.3 L2387.0 1238.3 L2390.0 1237.2 L2393.0 1236.2 L2396.0 1235.2 L2399.0 1234.2 L2402.0 1233.2 L2405.0 1232.3 L2408.0 1231.4 L2411.0 1230.5 L2414.0 1229.6 L2417.0 1228.7 L2420.0 1227.9 L2423.0 1227.1 L2426.0 1226.3 L2429.0 1225.6 L2432.0 1224.8 L2435.0 1224.1 L2438.0 1223.4 L2441.0 1222.8 L2444.0 1222.1 L2447.0 1221.5 L2450.0 1221.0 L2453.0 1220.4 L2456.0 1219.9 L2459.0 1219.4 L2462.0 1218.9 L2465.0 1218.5 L2468.0 1218.1 L2471.0 1217.7 L2474.0 1217.3 L2477.0 1217.0 L2480.0 1216.7 L2483.0 1216.4 L2486.0 1216.2 L2489.0 1216.0 L2492.0 1215.8 L2495.0 1215.6 L2498.0 1215.5 L2501.0 1215.4 L2504.0 1215.4 L2507.0 1215.4 L2510.0 1215.4 L2513.0 1215.4 L2516.0 1215.5 L2519.0 1215.6 L2522.0 1215.7 L2525.0 1215.9 L2528.0 1216.1 L2531.0 1216.3 L2534.0 1216.6 L2537.0 1216.9 L2540.0 1217.2 L2543.0 1217.6 L2546.0 1218.0 L2549.0 1218.5 L2552.0 1219.0 L2555.0 1219.5 L2558.0 1220.0 L2561.0 1220.6 L2564.0 1221.3 L2567.0 1221.9 L2570.0 1222.6 L2573.0 1223.4 L2576.0 1224.1 L2579.0 1224.9 L2582.0 1225.8 L2585.0 1226.7 L2588.0 1227.6 L2591.0 1228.6 L2594.0 1229.6 L2597.0 1230.7 L2600.0 1231.7 L2603.0 1232.9 L2606.0 1234.0 L2609.0 1235.3 L2612.0 1236.5 L2615.0 1237.8 L2618.0 1239.1 L2621.0 1240.5 L2624.0 1241.9 L2627.0 1243.4 L2630.0 1244.9" fill="none" stroke="#e3559d"/>
    </g>
  </g>
</svg>
<div class="yl t" style="left:541px;top:942px">50</div>
<div class="yl t" style="left:541px;top:1005.5px">40</div>
<div class="yl t" style="left:541px;top:1069px">30</div>
<div class="yl t" style="left:541px;top:1132.5px">20</div>
<div class="yl t" style="left:541px;top:1196px">10</div>
<div class="yl t" style="left:541px;top:1259.5px">0</div>
<div class="xl t" style="left:564.5px;top:1312px">11/26/2021</div>
<div class="xl t" style="left:788.5px;top:1312px">11/27/2021</div>
<div class="xl t" style="left:1012.5px;top:1312px">11/28/2021</div>
<div class="xl t" style="left:1236.5px;top:1312px">11/29/2021</div>
<div class="xl t" style="left:1460.5px;top:1312px">11/30/2021</div>
<div class="xl t" style="left:1684.5px;top:1312px">12/01/2021</div>
<div class="xl t" style="left:1908.5px;top:1312px">12/02/2021</div>
<div class="xl t" style="left:2132.5px;top:1312px">12/03/2021</div>
<div class="xl t" style="left:2356.5px;top:1312px">12/04/2021</div>
<div class="a" style="left:2560px;top:1300px;width:70px;height:40px;overflow:hidden"><div class="xl t" style="left:20.5px;top:12px">12/05/2021</div></div>

<div class="t" style="left:542px;top:1387px;font-size:23.5px;color:#6b6b6b;letter-spacing:0.05px">CCM Instances (12), Country (3), Cookie Category (12), Consent Location (12)</div>

<!-- tooltip point -->
<svg class="a" style="left:1500px;top:1030px" width="80" height="80">
  <circle cx="36.6" cy="30.2" r="11" fill="#cfe0f8"/>
  <circle cx="36.6" cy="30.2" r="7.6" fill="#e2479a"/>
</svg>
<!-- tooltip -->
<div class="a" style="left:1382px;top:1081px;width:232px;height:170px;background:#fff;border-radius:6px;box-shadow:0 3px 10px rgba(0,0,0,0.13)"></div>
<div class="t" style="left:1404px;top:1113px;font-size:39.7px;font-weight:700;color:#000;letter-spacing:0.9px">62%</div>
<div class="t" style="left:1498px;top:1128.5px;font-size:22.9px;color:#7b7b7b;letter-spacing:0.4px">12,024</div>
<svg class="a" style="left:1405px;top:1165px" width="30" height="60">
  <circle cx="14.2" cy="11.2" r="6" fill="#e2479a"/>
  <g fill="none" stroke="#777" stroke-width="1.6">
    <rect x="6.8" y="40.5" width="15" height="14.5" rx="1"/>
    <path d="M6.8 45 h15 M10.5 38.5 v4 M18 38.5 v4"/>
  </g>
</svg>
<div class="t" style="left:1442.5px;top:1165.5px;font-size:22.3px;color:#737373;transform:scaleX(1.115);transform-origin:0 0">Opted In</div>
<div class="t" style="left:1443px;top:1200.5px;font-size:23.6px;color:#737373;transform:scaleX(1.04);transform-origin:0 0">Nov 30, 2022</div>
<!-- hand cursor -->
<svg class="a" style="left:1528px;top:1056px" width="40" height="40">
  <path d="M11.5 21 V6.5 a2.5 2.5 0 0 1 5 0 V16 V14 a2.5 2.5 0 0 1 5 0 V17 V16 a2.5 2.5 0 0 1 5 0 V18 V18.5 a2.5 2.5 0 0 1 5 0 V27.5 c0 3 -1.8 5 -3 7 H15.5 c-2.5 -3 -6 -6.5 -10 -10.5 c-1.6 -1.6 0.6 -4.3 3.2 -2.8 z" fill="#fff" stroke="#111" stroke-width="1.9" stroke-linejoin="round"/>
  <path d="M17.5 25 v5.5 M21.5 25 v5.5 M25.5 25 v5.5" stroke="#111" stroke-width="1.6"/>
</svg>

<!-- dropdown menu -->
<div class="a" style="left:2324px;top:446px;width:301px;height:228px;background:#fff;border-radius:4px;box-shadow:0 2px 6px rgba(0,0,0,0.12)"></div>
<div class="a" style="left:2324px;top:620px;width:301px;height:53px;background:#ebecf0"></div>
<div class="mi t" style="top:470.5px">Configure</div>
<div class="mi t" style="top:523.5px">Download as Image</div>
<div class="mi t" style="top:576.5px">Duplicate</div>
<div class="mi t" style="top:630.5px">Delete</div>
<div class="a" style="left:2308px;top:604px;width:334px;height:85px;border:12px solid #e31b7c;border-radius:16px"></div>

<!-- ellipsis button highlight -->
<div class="a" style="left:2560px;top:357px;width:99px;height:99px;border:12px solid #e31b7c;border-radius:20px"></div>
<svg class="a" style="left:2595px;top:395px" width="32" height="16">
  <circle cx="7.8" cy="8.3" r="2.4" fill="#0a52cc"/><circle cx="16" cy="8.3" r="2.4" fill="#0a52cc"/><circle cx="24.2" cy="8.3" r="2.4" fill="#0a52cc"/>
</svg>

</body></html>
